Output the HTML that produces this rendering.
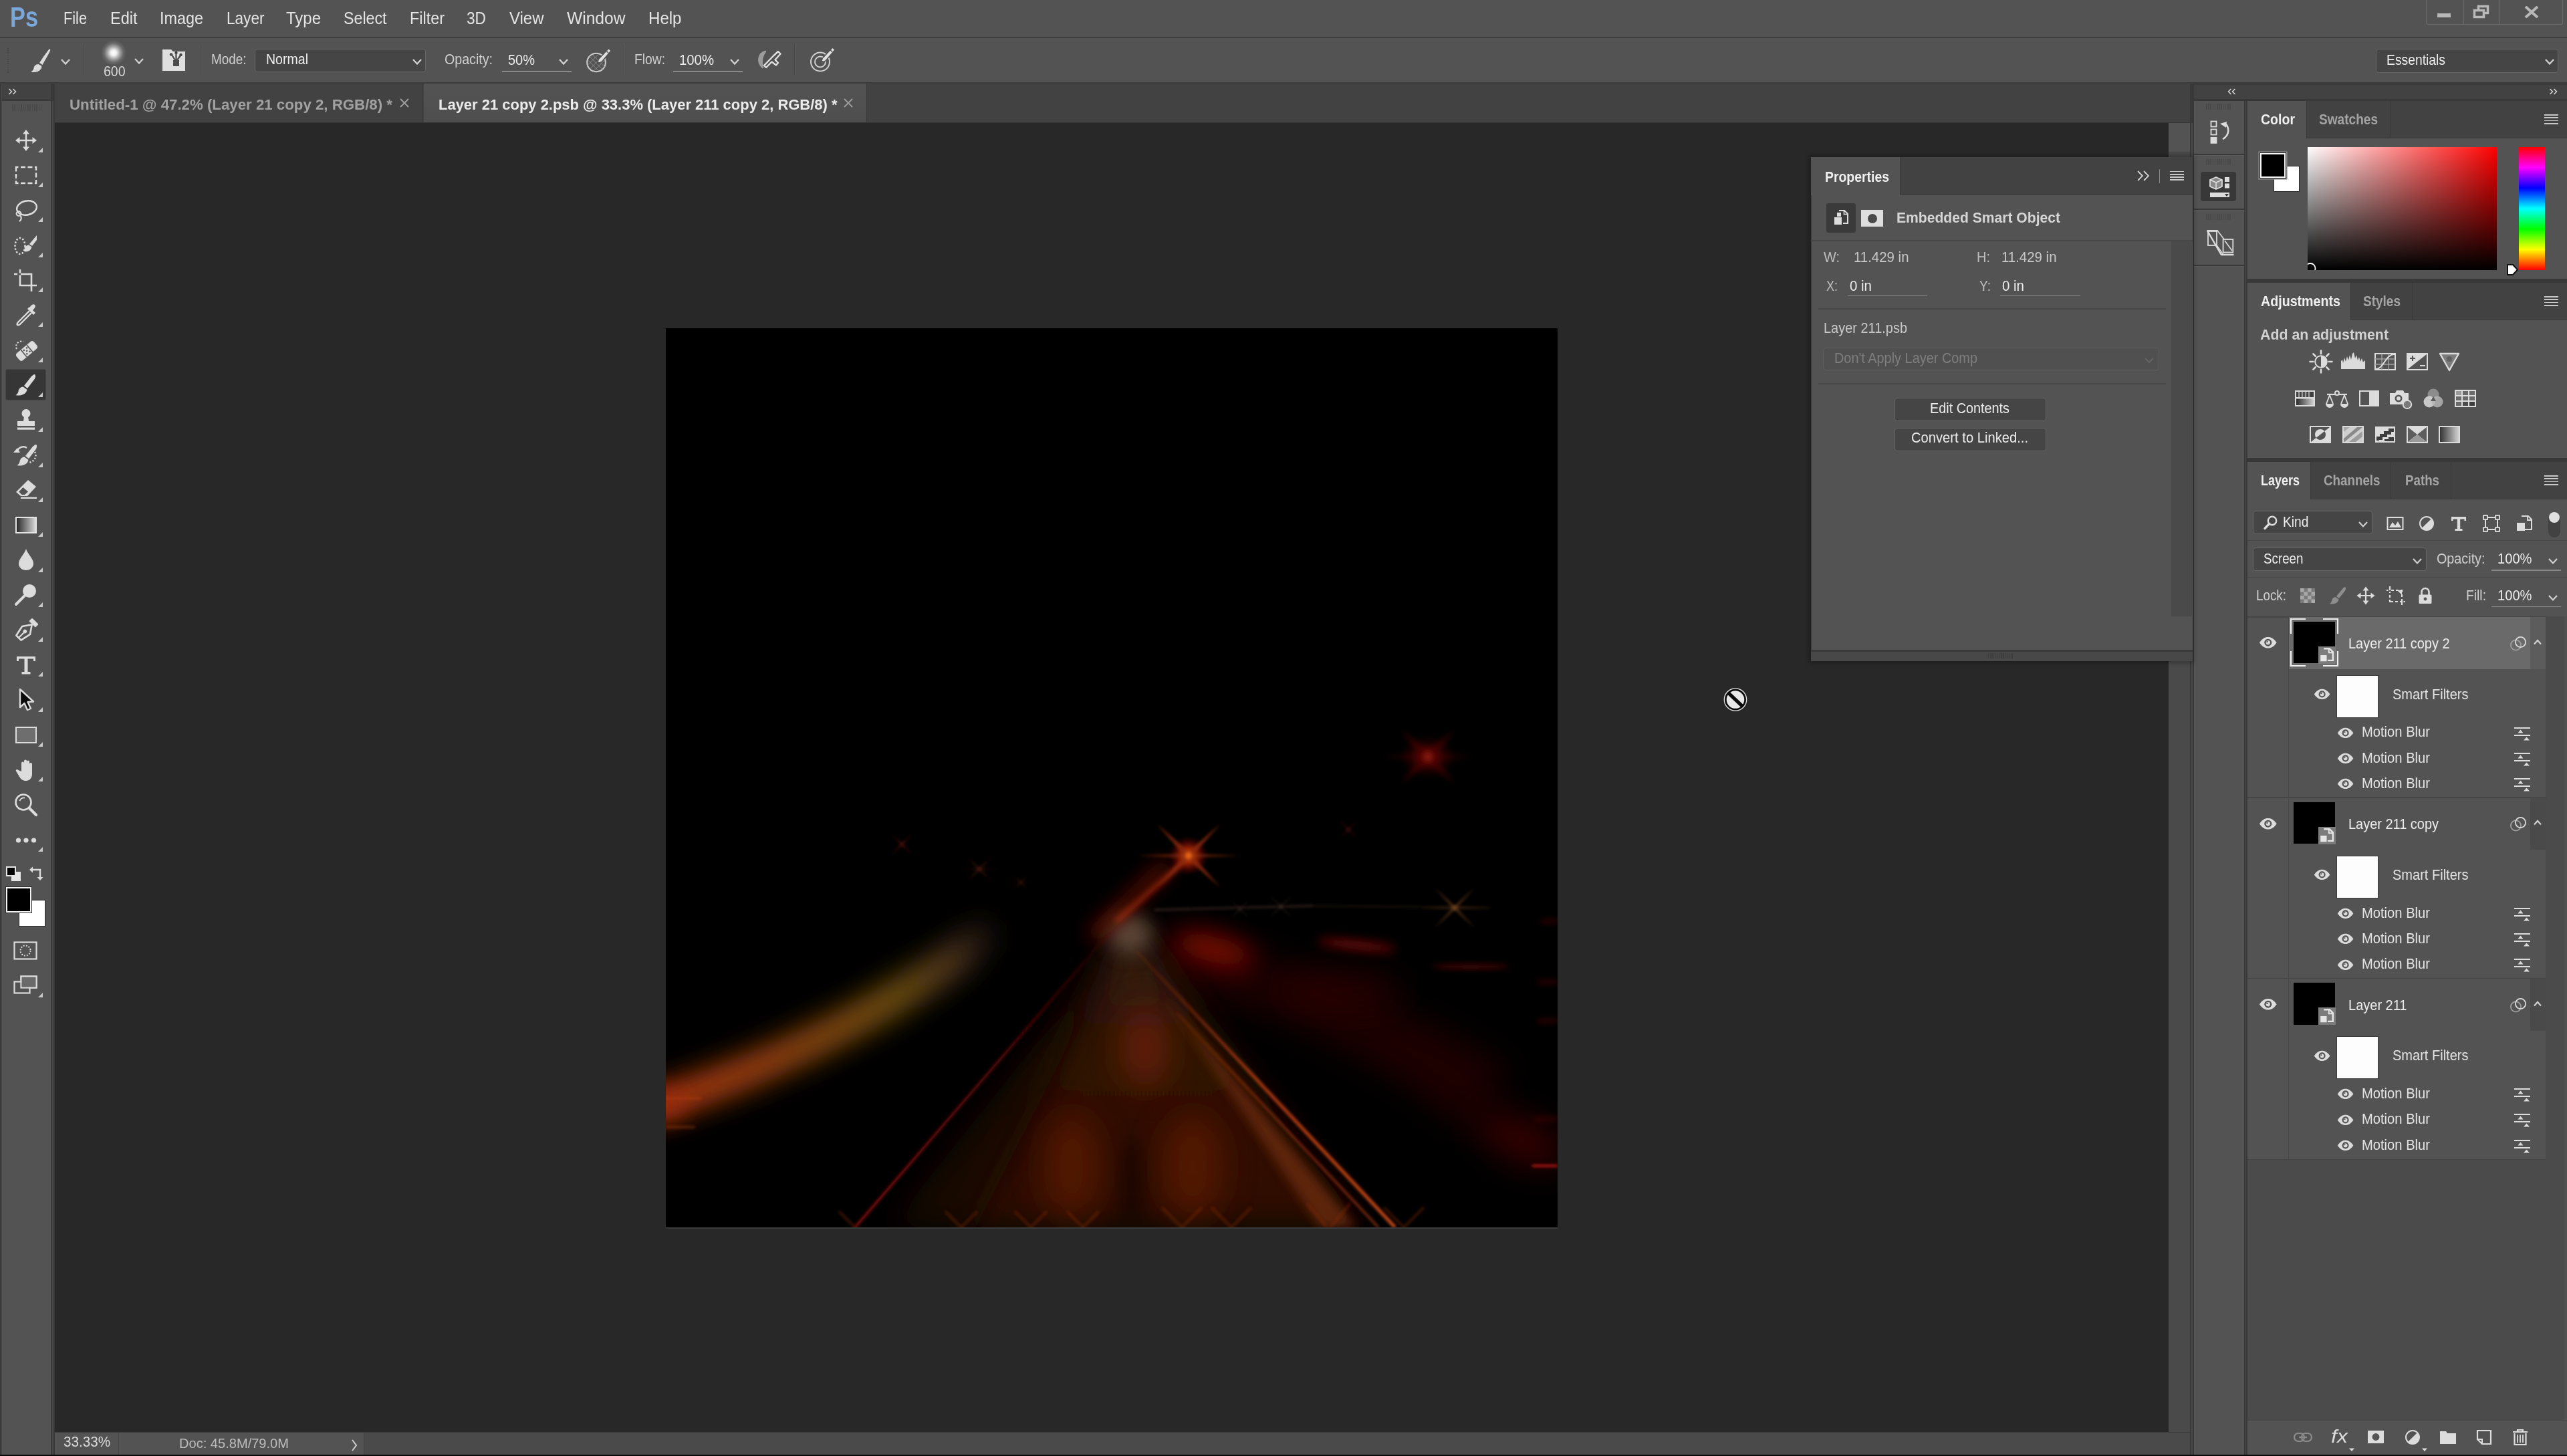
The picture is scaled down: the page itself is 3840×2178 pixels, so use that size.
<!DOCTYPE html>
<html><head><meta charset="utf-8"><title>Ps</title>
<style>
html,body{margin:0;padding:0;background:#535353;}
body{width:3840px;height:2178px;position:relative;overflow:hidden;font-family:"Liberation Sans",sans-serif;}
body>div,body>span,body>svg{position:absolute;display:block;}
body>span{white-space:pre;transform-origin:0 0;}
</style></head><body>
<div style="left:0px;top:0px;width:3840px;height:55px;background:#535353;"></div>
<div style="left:0px;top:55px;width:3840px;height:2px;background:#3e3e3e;"></div>
<div style="left:0px;top:57px;width:3840px;height:66px;background:#535353;"></div>
<div style="left:0px;top:123px;width:3840px;height:2px;background:#3c3c3c;"></div>
<div style="left:82px;top:125px;width:3194px;height:59px;background:#424242;"></div>
<div style="left:82px;top:184px;width:3162px;height:1959px;background:#282828;"></div>
<div style="left:3244px;top:184px;width:32px;height:1959px;background:#4a4a4a;"></div>
<div style="left:3244px;top:184px;width:32px;height:43px;background:#535353;"></div>
<div style="left:82px;top:2143px;width:3194px;height:33px;background:#4a4a4a;"></div>
<div style="left:82px;top:2143px;width:463px;height:33px;background:#535353;"></div>
<div style="left:82px;top:2142px;width:3194px;height:1px;background:#3a3a3a;"></div>
<div style="left:0px;top:125px;width:82px;height:2051px;background:#383838;"></div>
<div style="left:3px;top:125px;width:73px;height:23px;background:#424242;"></div>
<div style="left:3px;top:151px;width:73px;height:2025px;background:#535353;"></div>
<div style="left:3276px;top:125px;width:564px;height:2051px;background:#383838;"></div>
<div style="left:3282px;top:127px;width:558px;height:21px;background:#424242;"></div>
<div style="left:3282px;top:151px;width:75px;height:2025px;background:#535353;"></div>
<div style="left:3362px;top:151px;width:478px;height:2025px;background:#535353;"></div>
<div style="left:3278px;top:184px;width:2px;height:1992px;background:#4a4a4a;"></div>
<div style="left:3358.5px;top:151px;width:2px;height:2025px;background:#4a4a4a;"></div>
<div style="left:78px;top:151px;width:2px;height:2025px;background:#484848;"></div>
<div style="left:0px;top:2176px;width:3840px;height:2px;background:#0a0a0a;"></div>
<div style="left:996px;top:1836px;width:1334px;height:1.5px;background:#3a3a3a;"></div>
<svg style="left:996px;top:491px;" width="1334" height="1345" viewBox="996 491 1334 1345">
<defs>
<filter id="b2" filterUnits="userSpaceOnUse" x="900" y="400" width="1530" height="1540"><feGaussianBlur stdDeviation="2"/></filter>
<filter id="b4" filterUnits="userSpaceOnUse" x="900" y="400" width="1530" height="1540"><feGaussianBlur stdDeviation="4"/></filter>
<filter id="b8" filterUnits="userSpaceOnUse" x="900" y="400" width="1530" height="1540"><feGaussianBlur stdDeviation="8"/></filter>
<filter id="b14" filterUnits="userSpaceOnUse" x="900" y="400" width="1530" height="1540"><feGaussianBlur stdDeviation="14"/></filter>
<filter id="b20" filterUnits="userSpaceOnUse" x="900" y="400" width="1530" height="1540"><feGaussianBlur stdDeviation="20"/></filter>
<filter id="b25" filterUnits="userSpaceOnUse" x="900" y="400" width="1530" height="1540"><feGaussianBlur stdDeviation="25"/></filter>
<filter id="b40" filterUnits="userSpaceOnUse" x="900" y="400" width="1530" height="1540"><feGaussianBlur stdDeviation="40"/></filter>
<linearGradient id="sweep" gradientUnits="userSpaceOnUse" x1="996" y1="0" x2="1500" y2="0">
 <stop offset="0" stop-color="#b0380a"/><stop offset="0.3" stop-color="#96400a"/><stop offset="0.68" stop-color="#70500c"/><stop offset="0.86" stop-color="#5a3c22" stop-opacity="0.85"/><stop offset="1" stop-color="#4a3426" stop-opacity="0"/>
</linearGradient>
<linearGradient id="cone" gradientUnits="userSpaceOnUse" x1="0" y1="1380" x2="0" y2="1836">
 <stop offset="0" stop-color="#44291a" stop-opacity="0.9"/><stop offset="0.35" stop-color="#321606" stop-opacity="0.95"/><stop offset="1" stop-color="#340c04" stop-opacity="0.9"/>
</linearGradient>
<linearGradient id="rline" gradientUnits="userSpaceOnUse" x1="1700" y1="1423" x2="2087" y2="1836">
 <stop offset="0" stop-color="#7a2a08" stop-opacity="0.2"/><stop offset="0.45" stop-color="#b03a10"/><stop offset="1" stop-color="#e0521c"/>
</linearGradient>
<linearGradient id="lline" gradientUnits="userSpaceOnUse" x1="1279" y1="1836" x2="1660" y2="1395">
 <stop offset="0" stop-color="#a81010"/><stop offset="0.6" stop-color="#7a0c0c" stop-opacity="0.9"/><stop offset="1" stop-color="#5a0808" stop-opacity="0.2"/>
</linearGradient>
<radialGradient id="ostar"><stop offset="0" stop-color="#ee6a14"/><stop offset="0.3" stop-color="#d03808"/><stop offset="0.65" stop-color="#7a0c04" stop-opacity="0.7"/><stop offset="1" stop-color="#400000" stop-opacity="0"/></radialGradient>
<radialGradient id="rstar"><stop offset="0" stop-color="#8a160a"/><stop offset="0.3" stop-color="#640806" stop-opacity="0.9"/><stop offset="0.65" stop-color="#300202" stop-opacity="0.6"/><stop offset="1" stop-color="#200000" stop-opacity="0"/></radialGradient>
</defs>
<rect x="996" y="491" width="1334" height="1345" fill="#000"/>
<!-- red haze right -->
<path d="M1720 1400 C1850 1400 2050 1470 2260 1600 L2200 1700 C2050 1560 1850 1500 1740 1470 Z" fill="#3a0404" opacity="0.5" filter="url(#b25)"/>
<ellipse cx="1815" cy="1420" rx="62" ry="20" fill="#960c06" opacity="0.9" filter="url(#b20)" transform="rotate(14 1815 1420)"/>
<ellipse cx="2030" cy="1414" rx="60" ry="7" fill="#8a0c0c" opacity="0.8" filter="url(#b8)" transform="rotate(6 2030 1414)"/>
<ellipse cx="2200" cy="1446" rx="58" ry="3.5" fill="#6a0e0e" opacity="0.7" filter="url(#b4)"/>
<ellipse cx="2010" cy="1480" rx="90" ry="26" fill="#300404" opacity="0.7" filter="url(#b25)"/>
<ellipse cx="2275" cy="1705" rx="70" ry="34" fill="#4a0606" opacity="0.7" filter="url(#b25)" transform="rotate(25 2275 1705)"/>
<path d="M2292 1744 H2330" stroke="#a81212" stroke-width="4" filter="url(#b2)"/>
<path d="M2305 1378 H2330 M2300 1469 H2330 M2300 1527 H2330 M2295 1674 H2330" stroke="#4a0808" stroke-width="4" filter="url(#b4)"/>
<!-- left sweep -->
<path d="M960 1660 Q1262 1566 1492 1388" fill="none" stroke="url(#sweep)" stroke-width="50" filter="url(#b20)" opacity="1"/>
<path d="M996 1643 H1050 M996 1686 H1040" stroke="#c04a14" stroke-width="2" filter="url(#b2)" opacity="0.7"/>
<ellipse cx="1000" cy="1652" rx="30" ry="26" fill="#a02c08" filter="url(#b14)" opacity="0.45"/>
<!-- cone -->
<path d="M1686 1378 L1440 1836 L2040 1836 Z" fill="url(#cone)" filter="url(#b25)"/>
<path d="M1686 1390 L1330 1836 L1460 1836 Z" fill="#200803" opacity="0.7" filter="url(#b25)"/>
<ellipse cx="1713" cy="1568" rx="34" ry="60" fill="#7a2208" opacity="0.7" filter="url(#b25)"/>
<ellipse cx="1603" cy="1745" rx="42" ry="80" fill="#621a06" opacity="0.7" filter="url(#b25)"/>
<ellipse cx="1784" cy="1745" rx="46" ry="80" fill="#621c06" opacity="0.7" filter="url(#b25)"/>
<ellipse cx="1693" cy="1770" rx="14" ry="70" fill="#000" opacity="0.5" filter="url(#b14)"/>
<!-- inner right beam -->
<path d="M1735 1480 L1975 1836 L2030 1836 Z" fill="#6a2c0a" opacity="0.8" filter="url(#b8)"/>
<!-- gray glow -->
<ellipse cx="1690" cy="1396" rx="34" ry="30" fill="#66503e" opacity="0.85" filter="url(#b14)"/>
<!-- star beam -->
<path d="M1770 1290 L1672 1376" stroke="#b83010" stroke-width="8" stroke-linecap="round" filter="url(#b4)" opacity="0.75"/>
<path d="M1740 1300 L1640 1395" stroke="#7a0c04" stroke-width="26" stroke-linecap="round" filter="url(#b14)" opacity="0.6"/>
<!-- lines -->
<path d="M1279 1836 L1660 1395" stroke="url(#lline)" stroke-width="3.2" filter="url(#b2)"/>
<path d="M1700 1423 L2087 1836" stroke="url(#rline)" stroke-width="4.5" filter="url(#b2)"/>
<path d="M1760 1515 L2062 1836" stroke="url(#rline)" stroke-width="2.4" filter="url(#b2)" opacity="0.8"/>
<path d="M1727 1361 L1965 1355" stroke="#6a4a3e" stroke-width="1.8" filter="url(#b2)" opacity="0.7"/>
<path d="M1965 1355 L2230 1358" stroke="#4a3028" stroke-width="1.5" filter="url(#b2)" opacity="0.6"/>
<!-- bottom diamonds -->
<g stroke="#8a2c0c" stroke-width="2.2" fill="none" filter="url(#b2)" opacity="0.75">
<path d="M1255 1812 L1279 1836 M1414 1812 L1438 1836 L1462 1812 M1518 1812 L1542 1836 L1566 1812 M1596 1812 L1620 1836 L1644 1812"/>
<path d="M1738 1806 L1768 1836 L1798 1806 M1812 1806 L1842 1836 L1872 1806 M1955 1800 L1985 1836 M2020 1800 L1990 1836 M2070 1806 L2100 1836 L2130 1806"/>
</g>
<circle cx="1778" cy="1280" r="30" fill="url(#ostar)" opacity="0.8"/><g opacity="0.85"><g filter="url(#b2)" fill="#8a2c0a"><path d="M1774.8 1283.2 L1825.9 1327.9 L1781.2 1276.8 Z"/><path d="M1774.8 1276.8 L1730.1 1327.9 L1781.2 1283.2 Z"/><path d="M1781.2 1276.8 L1730.1 1232.1 L1774.8 1283.2 Z"/><path d="M1781.2 1283.2 L1825.9 1232.1 L1774.8 1276.8 Z"/><path d="M1778 1276.8 L1856 1280 L1778 1283.2 L1700 1280 Z" opacity="0.7"/></g><circle cx="1778" cy="1280" r="5.8" fill="#e86418" filter="url(#b2)"/></g><ellipse cx="2136" cy="1132" rx="44" ry="34" fill="url(#rstar)" opacity="0.8"/><g opacity="0.8"><g filter="url(#b4)" fill="#4a0606"><path d="M2131.1 1136.9 L2175.9 1171.9 L2140.9 1127.1 Z"/><path d="M2131.1 1127.1 L2096.1 1171.9 L2140.9 1136.9 Z"/><path d="M2140.9 1127.1 L2096.1 1092.1 L2131.1 1136.9 Z"/><path d="M2140.9 1136.9 L2175.9 1092.1 L2131.1 1127.1 Z"/><path d="M2136 1127.1 L2206 1132 L2136 1136.9 L2066 1132 Z" opacity="0.7"/></g><circle cx="2136" cy="1132" r="8.0" fill="#8c1a0c" filter="url(#b4)"/></g><g opacity="0.75"><g filter="url(#b2)" fill="#70401e"><path d="M2174.6 1359.4 L2205.9 1387.9 L2177.4 1356.6 Z"/><path d="M2174.6 1356.6 L2146.1 1387.9 L2177.4 1359.4 Z"/><path d="M2177.4 1356.6 L2146.1 1328.1 L2174.6 1359.4 Z"/><path d="M2177.4 1359.4 L2205.9 1328.1 L2174.6 1356.6 Z"/><path d="M2176 1356.6 L2231 1358 L2176 1359.4 L2121 1358 Z" opacity="0.7"/></g><circle cx="2176" cy="1358" r="3.0" fill="#9a5a2c" filter="url(#b2)"/></g><g opacity="0.7"><g filter="url(#b2)" fill="#4a0c0c"><path d="M1347.6 1264.4 L1365.0 1279.0 L1350.4 1261.6 Z"/><path d="M1347.6 1261.6 L1333.0 1279.0 L1350.4 1264.4 Z"/><path d="M1350.4 1261.6 L1333.0 1247.0 L1347.6 1264.4 Z"/><path d="M1350.4 1264.4 L1365.0 1247.0 L1347.6 1261.6 Z"/></g><circle cx="1349" cy="1263" r="2.1" fill="#6a1410" filter="url(#b2)"/></g><g opacity="0.7"><g filter="url(#b2)" fill="#4a1a10"><path d="M1463.8 1301.2 L1482.9 1317.9 L1466.2 1298.8 Z"/><path d="M1463.8 1298.8 L1447.1 1317.9 L1466.2 1301.2 Z"/><path d="M1466.2 1298.8 L1447.1 1282.1 L1463.8 1301.2 Z"/><path d="M1466.2 1301.2 L1482.9 1282.1 L1463.8 1298.8 Z"/><path d="M1465 1298.8 L1497 1300 L1465 1301.2 L1433 1300 Z" opacity="0.7"/></g><circle cx="1465" cy="1300" r="2.3" fill="#7a2c14" filter="url(#b2)"/></g><g opacity="0.6"><g filter="url(#b2)" fill="#3a140c"><path d="M1525.9 1321.1 L1539.0 1332.0 L1528.1 1318.9 Z"/><path d="M1525.9 1318.9 L1515.0 1332.0 L1528.1 1321.1 Z"/><path d="M1528.1 1318.9 L1515.0 1308.0 L1525.9 1321.1 Z"/><path d="M1528.1 1321.1 L1539.0 1308.0 L1525.9 1318.9 Z"/><path d="M1527 1319.0 L1552 1320 L1527 1321.0 L1502 1320 Z" opacity="0.7"/></g><circle cx="1527" cy="1320" r="1.6" fill="#6a2814" filter="url(#b2)"/></g><g opacity="0.6"><g filter="url(#b2)" fill="#2a1e1a"><path d="M1853.9 1361.1 L1869.0 1374.0 L1856.1 1358.9 Z"/><path d="M1853.9 1358.9 L1841.0 1374.0 L1856.1 1361.1 Z"/><path d="M1856.1 1358.9 L1841.0 1346.0 L1853.9 1361.1 Z"/><path d="M1856.1 1361.1 L1869.0 1346.0 L1853.9 1358.9 Z"/></g><circle cx="1855" cy="1360" r="1.8" fill="#4a3a34" filter="url(#b2)"/></g><g opacity="0.6"><g filter="url(#b2)" fill="#2a1e1a"><path d="M1914.9 1357.1 L1935.9 1375.9 L1917.1 1354.9 Z"/><path d="M1914.9 1354.9 L1896.1 1375.9 L1917.1 1357.1 Z"/><path d="M1917.1 1354.9 L1896.1 1336.1 L1914.9 1357.1 Z"/><path d="M1917.1 1357.1 L1935.9 1336.1 L1914.9 1354.9 Z"/></g><circle cx="1916" cy="1356" r="2.6" fill="#4a3a34" filter="url(#b2)"/></g><g opacity="0.7"><g filter="url(#b2)" fill="#3a0a0a"><path d="M2015.6 1242.4 L2031.0 1255.0 L2018.4 1239.6 Z"/><path d="M2015.6 1239.6 L2003.0 1255.0 L2018.4 1242.4 Z"/><path d="M2018.4 1239.6 L2003.0 1227.0 L2015.6 1242.4 Z"/><path d="M2018.4 1242.4 L2031.0 1227.0 L2015.6 1239.6 Z"/></g><circle cx="2017" cy="1241" r="1.8" fill="#5a100c" filter="url(#b2)"/></g></svg>
<span style="left:15px;top:5.45px;font-size:42px;line-height:42px;color:#7aa7d9;font-weight:bold;transform:scaleX(0.8175);">Ps</span>
<span style="left:95px;top:13.57px;font-size:26.5px;line-height:26.5px;color:#e4e4e4;transform:scaleX(0.8196);">File</span>
<span style="left:164.5px;top:13.57px;font-size:26.5px;line-height:26.5px;color:#e4e4e4;transform:scaleX(0.8869);">Edit</span>
<span style="left:239px;top:13.57px;font-size:26.5px;line-height:26.5px;color:#e4e4e4;transform:scaleX(0.8825);">Image</span>
<span style="left:338.5px;top:13.57px;font-size:26.5px;line-height:26.5px;color:#e4e4e4;transform:scaleX(0.8523);">Layer</span>
<span style="left:427.5px;top:13.57px;font-size:26.5px;line-height:26.5px;color:#e4e4e4;transform:scaleX(0.9051);">Type</span>
<span style="left:514px;top:13.57px;font-size:26.5px;line-height:26.5px;color:#e4e4e4;transform:scaleX(0.8757);">Select</span>
<span style="left:613px;top:13.57px;font-size:26.5px;line-height:26.5px;color:#e4e4e4;transform:scaleX(0.8830);">Filter</span>
<span style="left:698px;top:13.57px;font-size:26.5px;line-height:26.5px;color:#e4e4e4;transform:scaleX(0.8561);">3D</span>
<span style="left:762px;top:13.57px;font-size:26.5px;line-height:26.5px;color:#e4e4e4;transform:scaleX(0.9041);">View</span>
<span style="left:848px;top:13.57px;font-size:26.5px;line-height:26.5px;color:#e4e4e4;transform:scaleX(0.9284);">Window</span>
<span style="left:970px;top:13.57px;font-size:26.5px;line-height:26.5px;color:#e4e4e4;transform:scaleX(0.9082);">Help</span>
<div style="left:3629px;top:0px;width:205px;height:37px;background:transparent;border:1px solid #6a6a6a;border-top:none;box-sizing:border-box;border-radius:0 0 3px 3px;"></div>
<div style="left:3685px;top:0px;width:1px;height:36px;background:#6a6a6a;"></div>
<div style="left:3739px;top:0px;width:1px;height:36px;background:#6a6a6a;"></div>
<div style="left:3646px;top:20px;width:20px;height:6px;background:#b8b8b8;"></div>
<svg style="left:3699px;top:7px;" width="26" height="22" viewBox="0 0 26 22"><rect x="8.5" y="2.5" width="14" height="10" fill="none" stroke="#b8b8b8" stroke-width="3.5"/><rect x="2.5" y="8.5" width="14" height="10" fill="#535353" stroke="#b8b8b8" stroke-width="3.5"/></svg>
<svg style="left:3776px;top:9px;" width="22" height="18" viewBox="0 0 22 18"><path d="M2 1 L20 17 M20 1 L2 17" stroke="#b8b8b8" stroke-width="4" fill="none"/></svg>
<div style="left:11px;top:72.0px;width:2px;height:1.6px;background:#454545;"></div>
<div style="left:11px;top:75.2px;width:2px;height:1.6px;background:#454545;"></div>
<div style="left:11px;top:78.4px;width:2px;height:1.6px;background:#454545;"></div>
<div style="left:11px;top:81.6px;width:2px;height:1.6px;background:#454545;"></div>
<div style="left:11px;top:84.8px;width:2px;height:1.6px;background:#454545;"></div>
<div style="left:11px;top:88.0px;width:2px;height:1.6px;background:#454545;"></div>
<div style="left:11px;top:91.2px;width:2px;height:1.6px;background:#454545;"></div>
<div style="left:11px;top:94.4px;width:2px;height:1.6px;background:#454545;"></div>
<div style="left:11px;top:97.6px;width:2px;height:1.6px;background:#454545;"></div>
<div style="left:11px;top:100.8px;width:2px;height:1.6px;background:#454545;"></div>
<div style="left:11px;top:104.0px;width:2px;height:1.6px;background:#454545;"></div>
<div style="left:11px;top:107.2px;width:2px;height:1.6px;background:#454545;"></div>
<svg style="left:44px;top:72px;" width="36" height="38" viewBox="0 0 36 38"><path d="M30 1 C28 3 20 14 15 22 L19.5 25 C24 17 30 7 31.5 2.5 Z" fill="#dadada"/><path d="M13.5 24 C9 24 7 27 6.5 30 C6 33 4 34.5 2 35.5 C8 37 14 35.5 17 31.5 C18.5 29.5 18.5 27.5 18 26.5 Z" fill="#dadada"/></svg>
<svg style="left:90px;top:87px;" width="16" height="10.5" viewBox="0 0 16 10.5"><path d="M2 2 L8.0 8.5 L14 2" fill="none" stroke="#d0d0d0" stroke-width="2.3"/></svg>
<div style="left:124px;top:66px;width:1px;height:46px;background:#474747;"></div>
<div style="left:125px;top:66px;width:1px;height:46px;background:#5c5c5c;"></div>
<div style="left:151px;top:60px;width:38px;height:38px;background:radial-gradient(circle closest-side,#ffffff 0%,#f0f0f0 22%,#a8a8a8 48%,#6a6a6a 75%,rgba(83,83,83,0) 100%);"></div>
<span style="left:155px;top:96.80px;font-size:21.5px;line-height:21.5px;color:#d8d8d8;transform:scaleX(0.9060);">600</span>
<svg style="left:200px;top:86px;" width="16" height="10.5" viewBox="0 0 16 10.5"><path d="M2 2 L8.0 8.5 L14 2" fill="none" stroke="#d0d0d0" stroke-width="2.3"/></svg>
<svg style="left:243px;top:72px;" width="35" height="35" viewBox="0 0 35 35"><path d="M0 2 H13 L16 5 H34 V34 H0 Z" fill="#dedede"/><path d="M16 27 h9 v-9 h-9z" fill="#4a4a4a"/><path d="M19 18 L14 10 M20.5 18 L20.5 8 M22 18 L27 11" stroke="#4a4a4a" stroke-width="2.2" fill="none"/><circle cx="13" cy="9.5" r="2.2" fill="#4a4a4a"/><circle cx="20.5" cy="7" r="2.2" fill="#4a4a4a"/><circle cx="27.5" cy="10" r="2.2" fill="#4a4a4a"/></svg>
<div style="left:299px;top:66px;width:1px;height:46px;background:#474747;"></div>
<div style="left:300px;top:66px;width:1px;height:46px;background:#5c5c5c;"></div>
<span style="left:315.5px;top:79.30px;font-size:21.5px;line-height:21.5px;color:#cfcfcf;transform:scaleX(0.8786);">Mode:</span>
<div style="left:381px;top:73px;width:256px;height:35px;background:#454545;border:1px solid #666;box-sizing:border-box;border-radius:4px;"></div>
<span style="left:398px;top:79.30px;font-size:21.5px;line-height:21.5px;color:#ececec;transform:scaleX(0.9092);">Normal</span>
<svg style="left:616px;top:86.5px;" width="16" height="10.5" viewBox="0 0 16 10.5"><path d="M2 2 L8.0 8.5 L14 2" fill="none" stroke="#d0d0d0" stroke-width="2.3"/></svg>
<span style="left:665px;top:79.30px;font-size:21.5px;line-height:21.5px;color:#cfcfcf;transform:scaleX(0.9130);">Opacity:</span>
<span style="left:760px;top:79.80px;font-size:21.5px;line-height:21.5px;color:#ececec;transform:scaleX(0.9295);">50%</span>
<div style="left:751px;top:106px;width:104px;height:1.5px;background:#8a8a8a;"></div>
<svg style="left:835px;top:86.5px;" width="16" height="10.5" viewBox="0 0 16 10.5"><path d="M2 2 L8.0 8.5 L14 2" fill="none" stroke="#d0d0d0" stroke-width="2.3"/></svg>
<svg style="left:876px;top:71px;" width="40" height="40" viewBox="0 0 40 40"><circle cx="16" cy="22.5" r="13.8" fill="none" stroke="#cfcfcf" stroke-width="2"/><g stroke="#8c8c8c" stroke-width="1"><path d="M6 13.5 L26 33.5 M10 10.5 L29 29.5 M4 19.5 L20 35.5 M26 12.5 L5 33.5 M29 18.5 L11 36.5 M20 9.5 L3 26.5"/></g><path d="M34.5 1.5 L38 5 L24 21.5 L17 24.5 L19.5 17.5 Z" fill="#e0e0e0" stroke="#535353" stroke-width="1.4" stroke-linejoin="round"/><path d="M31.2 5.3 L34.3 8.5" stroke="#535353" stroke-width="1.4"/><path d="M17 24.5 L18.4 20.6 L20.8 22.9 Z" fill="#535353"/></svg>
<div style="left:933px;top:66px;width:1px;height:46px;background:#474747;"></div>
<div style="left:934px;top:66px;width:1px;height:46px;background:#5c5c5c;"></div>
<span style="left:949px;top:79.30px;font-size:21.5px;line-height:21.5px;color:#cfcfcf;transform:scaleX(0.8955);">Flow:</span>
<span style="left:1016px;top:79.80px;font-size:21.5px;line-height:21.5px;color:#ececec;transform:scaleX(0.9456);">100%</span>
<div style="left:1007px;top:106px;width:104px;height:1.5px;background:#8a8a8a;"></div>
<svg style="left:1091px;top:86.5px;" width="16" height="10.5" viewBox="0 0 16 10.5"><path d="M2 2 L8.0 8.5 L14 2" fill="none" stroke="#d0d0d0" stroke-width="2.3"/></svg>
<svg style="left:1131px;top:74px;" width="40" height="32" viewBox="0 0 40 32"><path d="M14 3 C3 6 1 19 10 27 C7.5 19 8.5 10 14 3Z" fill="#9c9c9c" stroke="#9c9c9c" stroke-width="2.5" stroke-linejoin="round"/><path d="M33 3 L36.5 6.5 L28.5 15.5 L33 20 L30 23.5 L23.5 18.5 L15 27 L12 24 L26.5 9 Z" fill="none" stroke="#dedede" stroke-width="2.4" stroke-linejoin="round"/></svg>
<div style="left:1188px;top:66px;width:1px;height:46px;background:#474747;"></div>
<div style="left:1189px;top:66px;width:1px;height:46px;background:#5c5c5c;"></div>
<svg style="left:1211px;top:69px;" width="40" height="40" viewBox="0 0 40 40"><circle cx="16" cy="23.5" r="14" fill="none" stroke="#cfcfcf" stroke-width="2"/><circle cx="16" cy="23.5" r="8" fill="none" stroke="#cfcfcf" stroke-width="2"/><g transform="translate(0,0.5)"><path d="M34.5 1.5 L38 5 L24 21.5 L17 24.5 L19.5 17.5 Z" fill="#e0e0e0" stroke="#535353" stroke-width="1.4" stroke-linejoin="round"/><path d="M31.2 5.3 L34.3 8.5" stroke="#535353" stroke-width="1.4"/><path d="M17 24.5 L18.4 20.6 L20.8 22.9 Z" fill="#535353"/></g></svg>
<div style="left:3554px;top:73px;width:273px;height:36px;background:#454545;border:1px solid #666;box-sizing:border-box;border-radius:4px;"></div>
<span style="left:3570px;top:79.45px;font-size:22.5px;line-height:22.5px;color:#ececec;transform:scaleX(0.8581);">Essentials</span>
<svg style="left:3806px;top:86.5px;" width="16" height="10.5" viewBox="0 0 16 10.5"><path d="M2 2 L8.0 8.5 L14 2" fill="none" stroke="#d0d0d0" stroke-width="2.3"/></svg>
<div style="left:82px;top:125px;width:551px;height:59px;background:#424242;border-right:1px solid #383838;box-sizing:border-box;"></div>
<div style="left:634px;top:125px;width:663px;height:59px;background:linear-gradient(#535353,#4e4e4e);border-right:1px solid #383838;box-sizing:border-box;"></div>
<div style="left:82px;top:183px;width:3194px;height:1px;background:#333;"></div>
<span style="left:103.5px;top:146.45px;font-size:22.5px;line-height:22.5px;color:#a2a2a2;font-weight:bold;transform:scaleX(0.9890);">Untitled-1 @ 47.2% (Layer 21 copy 2, RGB/8) *</span>
<span style="left:655.5px;top:146.45px;font-size:22.5px;line-height:22.5px;color:#ececec;font-weight:bold;transform:scaleX(0.9763);">Layer 21 copy 2.psb @ 33.3% (Layer 211 copy 2, RGB/8) *</span>
<svg style="left:597px;top:146px;" width="16" height="16" viewBox="0 0 16 16"><path d="M2 2 L14 14 M14 2 L2 14" stroke="#a0a0a0" stroke-width="1.8"/></svg>
<svg style="left:1261px;top:146px;" width="16" height="16" viewBox="0 0 16 16"><path d="M2 2 L14 14 M14 2 L2 14" stroke="#a0a0a0" stroke-width="1.8"/></svg>
<span style="left:94.5px;top:2147.30px;font-size:21.5px;line-height:21.5px;color:#dcdcdc;transform:scaleX(0.9600);">33.33%</span>
<div style="left:177px;top:2143px;width:1px;height:33px;background:#444;"></div>
<span style="left:267.5px;top:2147.72px;font-size:21px;line-height:21px;color:#bdbdbd;transform:scaleX(0.9558);">Doc: 45.8M/79.0M</span>
<svg style="left:524px;top:2152px;" width="12" height="20" viewBox="0 0 12 20"><path d="M3 2 L9 10 L3 18" fill="none" stroke="#cfcfcf" stroke-width="2"/></svg>
<div style="left:544px;top:2143px;width:1px;height:33px;background:#444;"></div>
<svg style="left:12px;top:132px;" width="15" height="10" viewBox="0 0 15 10"><path d="M1.5 1 L5.5 5 L1.5 9 M7.5 1 L11.5 5 L7.5 9" fill="none" stroke="#d8d8d8" stroke-width="1.5"/></svg>
<div style="left:3px;top:148px;width:73px;height:3px;background:#3a3a3a;"></div>
<div style="left:18.0px;top:155.5px;width:1.6px;height:10px;background:#494949;"></div>
<div style="left:21.3px;top:155.5px;width:1.6px;height:10px;background:#494949;"></div>
<div style="left:24.6px;top:155.5px;width:1.6px;height:10px;background:#494949;"></div>
<div style="left:27.9px;top:155.5px;width:1.6px;height:10px;background:#494949;"></div>
<div style="left:31.2px;top:155.5px;width:1.6px;height:10px;background:#494949;"></div>
<div style="left:34.5px;top:155.5px;width:1.6px;height:10px;background:#494949;"></div>
<div style="left:37.8px;top:155.5px;width:1.6px;height:10px;background:#494949;"></div>
<div style="left:41.099999999999994px;top:155.5px;width:1.6px;height:10px;background:#494949;"></div>
<div style="left:44.4px;top:155.5px;width:1.6px;height:10px;background:#494949;"></div>
<div style="left:47.7px;top:155.5px;width:1.6px;height:10px;background:#494949;"></div>
<div style="left:51.0px;top:155.5px;width:1.6px;height:10px;background:#494949;"></div>
<div style="left:54.3px;top:155.5px;width:1.6px;height:10px;background:#494949;"></div>
<div style="left:57.599999999999994px;top:155.5px;width:1.6px;height:10px;background:#494949;"></div>
<div style="left:60.9px;top:155.5px;width:1.6px;height:10px;background:#494949;"></div>
<div style="left:0px;top:125px;width:1.5px;height:2051px;background:#3a3a3a;"></div>
<div style="left:1.5px;top:125px;width:1.5px;height:2051px;background:#4a4a4a;"></div>
<svg style="left:18.5px;top:190.0px;" width="40" height="40" viewBox="0 0 40 40"><path d="M20 7 V33 M7 20 H33" fill="none" stroke="#dcdcdc" stroke-width="2.4"/><path d="M20 4 L25 10.5 H15 Z M20 36 L25 29.5 H15 Z M4 20 L10.5 15 V25 Z M36 20 L29.5 15 V25 Z" fill="#dcdcdc"/></svg>
<svg style="left:57px;top:220.5px;" width="8" height="8" viewBox="0 0 8 8"><path d="M7 0 V7 H0 Z" fill="#c8c8c8"/></svg>
<svg style="left:18.5px;top:242.3px;" width="40" height="40" viewBox="0 0 40 40"><rect x="5" y="8" width="30" height="24" fill="none" stroke="#dcdcdc" stroke-width="2.4" stroke-dasharray="7 3.5" stroke-dashoffset="3.5"/></svg>
<svg style="left:57px;top:272.8px;" width="8" height="8" viewBox="0 0 8 8"><path d="M7 0 V7 H0 Z" fill="#c8c8c8"/></svg>
<svg style="left:18.5px;top:294.7px;" width="40" height="40" viewBox="0 0 40 40"><ellipse cx="21" cy="16" rx="15" ry="10.5" transform="rotate(-12 21 16)" fill="none" stroke="#dcdcdc" stroke-width="2.4"/><circle cx="9" cy="24.5" r="3.4" fill="none" stroke="#dcdcdc" stroke-width="2"/><path d="M11 27 C14 30 13 34 10 36" fill="none" stroke="#dcdcdc" stroke-width="2.2"/></svg>
<svg style="left:57px;top:325.2px;" width="8" height="8" viewBox="0 0 8 8"><path d="M7 0 V7 H0 Z" fill="#c8c8c8"/></svg>
<svg style="left:18.5px;top:347.0px;" width="40" height="40" viewBox="0 0 40 40"><ellipse cx="11" cy="21" rx="7.5" ry="12" fill="none" stroke="#dcdcdc" stroke-width="2.6" stroke-dasharray="2.4 2.6"/><path d="M36 5 L36 12 L29 21 L25 18 Z" fill="#dcdcdc"/><path d="M24 19.5 C19 20 17.5 24 17 29 C22 30.5 27 28 28.5 22.5 Z" fill="#dcdcdc"/></svg>
<svg style="left:57px;top:377.5px;" width="8" height="8" viewBox="0 0 8 8"><path d="M7 0 V7 H0 Z" fill="#c8c8c8"/></svg>
<svg style="left:18.5px;top:399.3px;" width="40" height="40" viewBox="0 0 40 40"><path d="M11 4 V28 H36 M2 11 H28 V37" fill="none" stroke="#dcdcdc" stroke-width="2.6"/><rect x="7" y="9.5" width="5" height="3" fill="#535353"/><rect x="26.5" y="26.5" width="3" height="3" fill="#535353" opacity="0"/></svg>
<svg style="left:57px;top:429.8px;" width="8" height="8" viewBox="0 0 8 8"><path d="M7 0 V7 H0 Z" fill="#c8c8c8"/></svg>
<svg style="left:18.5px;top:451.6px;" width="40" height="40" viewBox="0 0 40 40"><path d="M25 13 L9 29 C7 31 6 33 7 34 C8 35 10 34 12 32 L28 16" fill="none" stroke="#dcdcdc" stroke-width="2.4"/><path d="M22 10 L31 19 L34 16 L30 12 C33 9 35 6 33 4 C31 2 28 4 26 7 L24 8 Z" fill="#dcdcdc"/></svg>
<svg style="left:57px;top:482.1px;" width="8" height="8" viewBox="0 0 8 8"><path d="M7 0 V7 H0 Z" fill="#c8c8c8"/></svg>
<svg style="left:18.5px;top:504.0px;" width="40" height="40" viewBox="0 0 40 40"><g transform="rotate(-40 21 21)"><rect x="4" y="14" width="34" height="14" rx="4" fill="#dcdcdc"/><rect x="14.5" y="14" width="1.6" height="14" fill="#535353"/><rect x="26" y="14" width="1.6" height="14" fill="#535353"/><g fill="#535353"><circle cx="18.5" cy="17.5" r="1.3"/><circle cx="21.2" cy="21" r="1.3"/><circle cx="24" cy="17.5" r="1.3"/><circle cx="18.5" cy="24.5" r="1.3"/><circle cx="24" cy="24.5" r="1.3"/><circle cx="21.2" cy="17.5" r="0"/></g></g><path d="M6 18 C3 12 8 5 16 7" fill="none" stroke="#dcdcdc" stroke-width="2.2" stroke-dasharray="2.2 2.4"/></svg>
<svg style="left:57px;top:534.5px;" width="8" height="8" viewBox="0 0 8 8"><path d="M7 0 V7 H0 Z" fill="#c8c8c8"/></svg>
<div style="left:8px;top:552px;width:61px;height:47px;background:#363636;border:1px solid #464646;box-sizing:border-box;border-radius:3px;"></div>
<svg style="left:18.5px;top:556.3px;" width="40" height="40" viewBox="0 0 40 40"><path d="M33 4 C35 6 34 9 32 12 L22 25 L17 21 L28 7 C30 5 32 3.5 33 4 Z" fill="#dcdcdc"/><path d="M15.5 22.5 C11 23 9 26 8.5 29.5 C8 32.5 6 34 4.5 35 C10 36.5 17 35 20 30.5 C21.5 28.5 21.5 27 21 26.5 Z" fill="#dcdcdc"/></svg>
<svg style="left:57px;top:586.8px;" width="8" height="8" viewBox="0 0 8 8"><path d="M7 0 V7 H0 Z" fill="#c8c8c8"/></svg>
<svg style="left:18.5px;top:608.6px;" width="40" height="40" viewBox="0 0 40 40"><circle cx="20" cy="9.5" r="6.5" fill="#dcdcdc"/><path d="M17 14 H23 L24 21 H33 V28 H7 V21 H16 Z" fill="#dcdcdc"/><rect x="7" y="30.5" width="26" height="3.2" fill="#dcdcdc"/></svg>
<svg style="left:57px;top:639.1px;" width="8" height="8" viewBox="0 0 8 8"><path d="M7 0 V7 H0 Z" fill="#c8c8c8"/></svg>
<svg style="left:18.5px;top:661.0px;" width="40" height="40" viewBox="0 0 40 40"><g transform="translate(2,0)"><path d="M33 4 C35 6 34 9 32 12 L22 25 L17 21 L28 7 C30 5 32 3.5 33 4 Z" fill="#dcdcdc"/><path d="M15.5 22.5 C11 23 9 26 8.5 29.5 C8 32.5 6 34 4.5 35 C10 36.5 17 35 20 30.5 C21.5 28.5 21.5 27 21 26.5 Z" fill="#dcdcdc"/></g><path d="M1 16 L11 16 L7 9 Z" fill="#dcdcdc"/><path d="M7 13 C10 7 17 6 21 9" fill="none" stroke="#dcdcdc" stroke-width="2.4"/><path d="M33 15 C37 21 33 29 25 31" fill="none" stroke="#dcdcdc" stroke-width="2.4" stroke-dasharray="2 2.6"/></svg>
<svg style="left:57px;top:691.5px;" width="8" height="8" viewBox="0 0 8 8"><path d="M7 0 V7 H0 Z" fill="#c8c8c8"/></svg>
<svg style="left:18.5px;top:713.3px;" width="40" height="40" viewBox="0 0 40 40"><path d="M23 5 L35 15 L22 29 H12 L5 23 Z" fill="#dcdcdc"/><path d="M9.2 22.6 L15.5 16 L23 22.5 L18 27 H13.5 Z" fill="#535353"/><path d="M12 31.8 H36" stroke="#dcdcdc" stroke-width="2.4"/></svg>
<svg style="left:57px;top:743.8px;" width="8" height="8" viewBox="0 0 8 8"><path d="M7 0 V7 H0 Z" fill="#c8c8c8"/></svg>
<div style="left:22.5px;top:772.6px;width:32px;height:25px;box-sizing:border-box;border:2.5px solid #e4e4e4;background:linear-gradient(90deg,#2a2a2a,#d8d8d8)"></div>
<svg style="left:18.5px;top:765.6px;" width="40" height="40" viewBox="0 0 40 40"></svg>
<svg style="left:57px;top:796.1px;" width="8" height="8" viewBox="0 0 8 8"><path d="M7 0 V7 H0 Z" fill="#c8c8c8"/></svg>
<svg style="left:18.5px;top:818.0px;" width="40" height="40" viewBox="0 0 40 40"><path d="M20 3 C22 10 31 18 31 25 C31 31 26 35 20 35 C14 35 9 31 9 25 C9 18 18 10 20 3 Z" fill="#dcdcdc"/></svg>
<svg style="left:57px;top:848.5px;" width="8" height="8" viewBox="0 0 8 8"><path d="M7 0 V7 H0 Z" fill="#c8c8c8"/></svg>
<svg style="left:18.5px;top:870.3px;" width="40" height="40" viewBox="0 0 40 40"><circle cx="25" cy="14" r="10" fill="#dcdcdc"/><path d="M18 21 L5 34" stroke="#dcdcdc" stroke-width="4" stroke-linecap="round"/></svg>
<svg style="left:57px;top:900.8px;" width="8" height="8" viewBox="0 0 8 8"><path d="M7 0 V7 H0 Z" fill="#c8c8c8"/></svg>
<svg style="left:18.5px;top:922.6px;" width="40" height="40" viewBox="0 0 40 40"><g transform="rotate(45 20 20) translate(20 20) scale(1.12) translate(-20 -20)"><path d="M20 9 L27.5 20 L24.5 34 H15.5 L12.5 20 Z" fill="none" stroke="#dcdcdc" stroke-width="2.3" stroke-linejoin="round"/><path d="M20 34 V24" stroke="#dcdcdc" stroke-width="1.9"/><circle cx="20" cy="22" r="2.5" fill="#dcdcdc"/><rect x="14" y="2.5" width="12" height="6" rx="1" fill="#dcdcdc"/></g></svg>
<svg style="left:57px;top:953.1px;" width="8" height="8" viewBox="0 0 8 8"><path d="M7 0 V7 H0 Z" fill="#c8c8c8"/></svg>
<svg style="left:18.5px;top:974.9px;" width="40" height="40" viewBox="0 0 40 40"><path d="M6 7 H34 V14 H31 V10.5 H22.5 V30 H26.5 V33.5 H13.5 V30 H17.5 V10.5 H9 V14 H6 Z" fill="#dcdcdc"/></svg>
<svg style="left:57px;top:1005.4px;" width="8" height="8" viewBox="0 0 8 8"><path d="M7 0 V7 H0 Z" fill="#c8c8c8"/></svg>
<svg style="left:18.5px;top:1027.3px;" width="40" height="40" viewBox="0 0 40 40"><path d="M11 4 L11 31 L17.5 25 L22 35 L27 33 L22.5 23 L31 22.5 Z" fill="#0a0a0a" stroke="#dcdcdc" stroke-width="2.4" stroke-linejoin="round"/></svg>
<svg style="left:57px;top:1057.8px;" width="8" height="8" viewBox="0 0 8 8"><path d="M7 0 V7 H0 Z" fill="#c8c8c8"/></svg>
<div style="left:22.5px;top:1086.6px;width:32px;height:25px;box-sizing:border-box;border:2.5px solid #dcdcdc;background:#6e6e6e"></div>
<svg style="left:18.5px;top:1079.6px;" width="40" height="40" viewBox="0 0 40 40"></svg>
<svg style="left:57px;top:1110.1px;" width="8" height="8" viewBox="0 0 8 8"><path d="M7 0 V7 H0 Z" fill="#c8c8c8"/></svg>
<svg style="left:18.5px;top:1131.9px;" width="40" height="40" viewBox="0 0 40 40"><path d="M13 22 V9.5 a2 2 0 0 1 4 0 V19 V6.5 a2 2 0 0 1 4 0 V19 V7.5 a2 2 0 0 1 4 0 V20 V11 a2 2 0 0 1 4 0 V26 C29 32 25 36 20 36 C15 36 12 33.5 9.5 29 L5 21.5 C4 19.5 6.5 18 8.5 20 Z" fill="#dcdcdc"/></svg>
<svg style="left:57px;top:1162.4px;" width="8" height="8" viewBox="0 0 8 8"><path d="M7 0 V7 H0 Z" fill="#c8c8c8"/></svg>
<svg style="left:18.5px;top:1184.3px;" width="40" height="40" viewBox="0 0 40 40"><circle cx="16" cy="16" r="11.5" fill="none" stroke="#dcdcdc" stroke-width="2.6"/><path d="M10.5 14 A6.5 6.5 0 0 1 18 9.5" fill="none" stroke="#dcdcdc" stroke-width="1.8"/><path d="M24.5 24.5 L35 35" stroke="#dcdcdc" stroke-width="4.2" stroke-linecap="round"/></svg>
<svg style="left:18.5px;top:1236.6px;" width="40" height="40" viewBox="0 0 40 40"><circle cx="8.5" cy="20" r="3.6" fill="#dcdcdc"/><circle cx="20" cy="20" r="3.6" fill="#dcdcdc"/><circle cx="31.5" cy="20" r="3.6" fill="#dcdcdc"/></svg>
<svg style="left:57px;top:1267.1px;" width="8" height="8" viewBox="0 0 8 8"><path d="M7 0 V7 H0 Z" fill="#c8c8c8"/></svg>
<div style="left:17px;top:1304px;width:14px;height:14px;background:#e6e6e6;"></div>
<div style="left:9px;top:1296px;width:15px;height:15px;background:#000;border:2px solid #e6e6e6;box-sizing:border-box;"></div>
<svg style="left:43px;top:1294px;" width="24" height="24" viewBox="0 0 24 24"><path d="M6 2.5 L1 7 L6 11.5 Z M21.5 18 L17 23 L12.5 18 Z" fill="#dcdcdc"/><path d="M5 7 H17 V19" fill="none" stroke="#dcdcdc" stroke-width="2.4"/></svg>
<div style="left:28px;top:1346px;width:40px;height:40px;background:#fff;border:1.5px solid #2c2c2c;box-sizing:border-box;"></div>
<div style="left:9px;top:1327px;width:38px;height:38px;background:#000;border:2.5px solid #f4f4f4;box-sizing:border-box;outline:1.5px solid #2c2c2c;"></div>
<svg style="left:20px;top:1408px;" width="37" height="29" viewBox="0 0 37 29"><rect x="1.5" y="1.5" width="33" height="25" fill="none" stroke="#dcdcdc" stroke-width="2.2"/><circle cx="18" cy="14" r="7.5" fill="none" stroke="#dcdcdc" stroke-width="2" stroke-dasharray="1.8 2.2"/></svg>
<svg style="left:20px;top:1459px;" width="37" height="31" viewBox="0 0 37 31"><rect x="11.5" y="1.5" width="23" height="17" fill="#535353" stroke="#dcdcdc" stroke-width="2.2"/><rect x="1.5" y="9.5" width="23" height="17" fill="#535353" stroke="#dcdcdc" stroke-width="2.2"/><rect x="11.5" y="1.5" width="23" height="17" fill="none" stroke="#dcdcdc" stroke-width="2.2"/><rect x="12.6" y="2.6" width="20.8" height="14.8" fill="#6a6a6a"/></svg>
<svg style="left:57px;top:1484.5px;" width="8" height="8" viewBox="0 0 8 8"><path d="M7 0 V7 H0 Z" fill="#c8c8c8"/></svg>
<svg style="left:3332px;top:132px;" width="15" height="10" viewBox="0 0 15 10"><path d="M5.5 1 L1.5 5 L5.5 9 M11.5 1 L7.5 5 L11.5 9" fill="none" stroke="#d8d8d8" stroke-width="1.5"/></svg>
<svg style="left:3813px;top:132px;" width="15" height="10" viewBox="0 0 15 10"><path d="M1.5 1 L5.5 5 L1.5 9 M7.5 1 L11.5 5 L7.5 9" fill="none" stroke="#d8d8d8" stroke-width="1.5"/></svg>
<div style="left:3282px;top:148px;width:558px;height:3px;background:#383838;"></div>
<div style="left:3300.0px;top:155px;width:1.6px;height:9px;background:#494949;"></div>
<div style="left:3303.2px;top:155px;width:1.6px;height:9px;background:#494949;"></div>
<div style="left:3306.4px;top:155px;width:1.6px;height:9px;background:#494949;"></div>
<div style="left:3309.6px;top:155px;width:1.6px;height:9px;background:#494949;"></div>
<div style="left:3312.8px;top:155px;width:1.6px;height:9px;background:#494949;"></div>
<div style="left:3316.0px;top:155px;width:1.6px;height:9px;background:#494949;"></div>
<div style="left:3319.2px;top:155px;width:1.6px;height:9px;background:#494949;"></div>
<div style="left:3322.4px;top:155px;width:1.6px;height:9px;background:#494949;"></div>
<div style="left:3325.6px;top:155px;width:1.6px;height:9px;background:#494949;"></div>
<div style="left:3328.8px;top:155px;width:1.6px;height:9px;background:#494949;"></div>
<div style="left:3332.0px;top:155px;width:1.6px;height:9px;background:#494949;"></div>
<div style="left:3335.2px;top:155px;width:1.6px;height:9px;background:#494949;"></div>
<svg style="left:3304px;top:178px;" width="34" height="38" viewBox="0 0 34 38"><rect x="3.5" y="3.5" width="8" height="8" fill="none" stroke="#dcdcdc" stroke-width="1.8"/><rect x="3.5" y="15.5" width="8" height="8" fill="none" stroke="#dcdcdc" stroke-width="1.8"/><rect x="2.6" y="27" width="9.8" height="9.8" fill="#dcdcdc"/><path d="M24 6 C31 12 32 24 21 30" fill="none" stroke="#dcdcdc" stroke-width="2.6"/><path d="M17 7 L27 4 L26 13 Z" fill="#dcdcdc"/></svg>
<div style="left:3282px;top:230px;width:75px;height:2px;background:#383838;"></div>
<div style="left:3282px;top:232px;width:75px;height:1px;background:#5c5c5c;"></div>
<div style="left:3300.0px;top:238px;width:1.6px;height:9px;background:#494949;"></div>
<div style="left:3303.2px;top:238px;width:1.6px;height:9px;background:#494949;"></div>
<div style="left:3306.4px;top:238px;width:1.6px;height:9px;background:#494949;"></div>
<div style="left:3309.6px;top:238px;width:1.6px;height:9px;background:#494949;"></div>
<div style="left:3312.8px;top:238px;width:1.6px;height:9px;background:#494949;"></div>
<div style="left:3316.0px;top:238px;width:1.6px;height:9px;background:#494949;"></div>
<div style="left:3319.2px;top:238px;width:1.6px;height:9px;background:#494949;"></div>
<div style="left:3322.4px;top:238px;width:1.6px;height:9px;background:#494949;"></div>
<div style="left:3325.6px;top:238px;width:1.6px;height:9px;background:#494949;"></div>
<div style="left:3328.8px;top:238px;width:1.6px;height:9px;background:#494949;"></div>
<div style="left:3332.0px;top:238px;width:1.6px;height:9px;background:#494949;"></div>
<div style="left:3335.2px;top:238px;width:1.6px;height:9px;background:#494949;"></div>
<div style="left:3292px;top:257px;width:53px;height:44px;background:#383838;border-radius:4px;"></div>
<svg style="left:3304px;top:263px;" width="34" height="34" viewBox="0 0 34 34"><path d="M11 2 L20 6 V16 L11 20 L2 16 V6 Z" fill="#8a8a8a" stroke="#dcdcdc" stroke-width="1.8" stroke-linejoin="round"/><path d="M2 6 L11 10 L20 6 M11 10 V20" fill="none" stroke="#dcdcdc" stroke-width="1.6"/><rect x="24" y="2" width="7" height="7" fill="#dcdcdc"/><rect x="24" y="11.5" width="7" height="7" fill="#dcdcdc"/><rect x="2" y="25" width="29" height="7" fill="#dcdcdc"/><path d="M24 27 H30 L27 31 Z" fill="#383838"/></svg>
<div style="left:3282px;top:312px;width:75px;height:2px;background:#383838;"></div>
<div style="left:3282px;top:314px;width:75px;height:1px;background:#5c5c5c;"></div>
<div style="left:3300.0px;top:320px;width:1.6px;height:9px;background:#494949;"></div>
<div style="left:3303.2px;top:320px;width:1.6px;height:9px;background:#494949;"></div>
<div style="left:3306.4px;top:320px;width:1.6px;height:9px;background:#494949;"></div>
<div style="left:3309.6px;top:320px;width:1.6px;height:9px;background:#494949;"></div>
<div style="left:3312.8px;top:320px;width:1.6px;height:9px;background:#494949;"></div>
<div style="left:3316.0px;top:320px;width:1.6px;height:9px;background:#494949;"></div>
<div style="left:3319.2px;top:320px;width:1.6px;height:9px;background:#494949;"></div>
<div style="left:3322.4px;top:320px;width:1.6px;height:9px;background:#494949;"></div>
<div style="left:3325.6px;top:320px;width:1.6px;height:9px;background:#494949;"></div>
<div style="left:3328.8px;top:320px;width:1.6px;height:9px;background:#494949;"></div>
<div style="left:3332.0px;top:320px;width:1.6px;height:9px;background:#494949;"></div>
<div style="left:3335.2px;top:320px;width:1.6px;height:9px;background:#494949;"></div>
<svg style="left:3300px;top:342px;" width="44" height="44" viewBox="0 0 44 44"><rect x="3" y="4" width="13" height="21" fill="none" stroke="#dcdcdc" stroke-width="1.8"/><rect x="25.6" y="16" width="14.7" height="19.5" fill="none" stroke="#dcdcdc" stroke-width="1.8"/><path d="M1.8 2.8 L22.8 39 H41.5" fill="none" stroke="#dcdcdc" stroke-width="2.4" stroke-linejoin="round"/><path d="M1.8 2.8 H17 L27 16 M16 25 L26 39 M28 18 L39 33" fill="none" stroke="#dcdcdc" stroke-width="1.6"/></svg>
<div style="left:3282px;top:396px;width:75px;height:2px;background:#383838;"></div>
<div style="left:3282px;top:398px;width:75px;height:1px;background:#5c5c5c;"></div>
<div style="left:3357px;top:151px;width:5px;height:2025px;background:#383838;"></div>
<div style="left:3358.5px;top:151px;width:1.8px;height:2025px;background:#4c4c4c;"></div>
<div style="left:3362px;top:151px;width:478px;height:56px;background:#424242;"></div>
<div style="left:3362px;top:206px;width:478px;height:1px;background:#3a3a3a;"></div>
<div style="left:3362px;top:151px;width:89px;height:56px;background:#535353;border-right:1px solid #3a3a3a;box-sizing:border-box;"></div>
<span style="left:3381.5px;top:167.88px;font-size:22px;line-height:22px;color:#f0f0f0;font-weight:bold;transform:scaleX(0.8879);">Color</span>
<div style="left:3451px;top:151px;width:125px;height:55px;background:#424242;border-right:1px solid #383838;box-sizing:border-box;"></div>
<span style="left:3469px;top:167.88px;font-size:22px;line-height:22px;color:#a4a4a4;font-weight:bold;transform:scaleX(0.8670);">Swatches</span>
<div style="left:3806px;top:171.0px;width:20.5px;height:1.8px;background:#c8c8c8;"></div>
<div style="left:3806px;top:175.3px;width:20.5px;height:1.8px;background:#c8c8c8;"></div>
<div style="left:3806px;top:179.6px;width:20.5px;height:1.8px;background:#c8c8c8;"></div>
<div style="left:3806px;top:183.9px;width:20.5px;height:1.8px;background:#c8c8c8;"></div>
<div style="left:3401px;top:248px;width:39px;height:39px;background:#fff;border:1.5px solid #2c2c2c;box-sizing:border-box;"></div>
<div style="left:3381px;top:228.5px;width:37.5px;height:37.5px;background:#000;border:2px solid #f4f4f4;box-sizing:border-box;box-shadow:0 0 0 1px #1c1c1c,0 0 0 2.6px #8c8c8c;"></div>
<div style="left:3452px;top:220px;width:283px;height:184px;background:linear-gradient(to top,#000,rgba(0,0,0,0)),linear-gradient(to right,#fff,#f00);"></div>
<div style="left:3768px;top:220px;width:39px;height:184px;background:linear-gradient(to bottom,#ff0000 0%,#ff00ff 16.6%,#0000ff 33.3%,#00ffff 50%,#00ff00 66.6%,#ffff00 83.3%,#ff0000 100%);"></div>
<svg style="left:3748px;top:393px;" width="22" height="22" viewBox="0 0 22 22"><path d="M3 3 H11 L18 10.5 L11 18 H3 Z" fill="#fff" stroke="#111" stroke-width="2" stroke-linejoin="round"/></svg>
<svg style="left:3452px;top:390px;" width="20" height="14" viewBox="0 0 20 14"><circle cx="4" cy="11.5" r="7.5" fill="none" stroke="#fff" stroke-width="1.8"/></svg>
<div style="left:3362px;top:417px;width:478px;height:6px;background:#383838;"></div>
<div style="left:3362px;top:423px;width:478px;height:56px;background:#424242;"></div>
<div style="left:3362px;top:478px;width:478px;height:1px;background:#3a3a3a;"></div>
<div style="left:3362px;top:423px;width:155px;height:56px;background:#535353;border-right:1px solid #3a3a3a;box-sizing:border-box;"></div>
<span style="left:3381.5px;top:439.88px;font-size:22px;line-height:22px;color:#f0f0f0;font-weight:bold;transform:scaleX(0.8931);">Adjustments</span>
<div style="left:3517px;top:423px;width:92px;height:55px;background:#424242;border-right:1px solid #383838;box-sizing:border-box;"></div>
<span style="left:3535px;top:439.88px;font-size:22px;line-height:22px;color:#a4a4a4;font-weight:bold;transform:scaleX(0.8639);">Styles</span>
<div style="left:3806px;top:443.0px;width:20.5px;height:1.8px;background:#c8c8c8;"></div>
<div style="left:3806px;top:447.3px;width:20.5px;height:1.8px;background:#c8c8c8;"></div>
<div style="left:3806px;top:451.6px;width:20.5px;height:1.8px;background:#c8c8c8;"></div>
<div style="left:3806px;top:455.9px;width:20.5px;height:1.8px;background:#c8c8c8;"></div>
<span style="left:3381px;top:489.88px;font-size:22px;line-height:22px;color:#d2d2d2;font-weight:bold;transform:scaleX(0.9696);">Add an adjustment</span>
<div style="left:3362px;top:685px;width:478px;height:6px;background:#383838;"></div>
<div style="left:3362px;top:691px;width:478px;height:56px;background:#424242;"></div>
<div style="left:3362px;top:746px;width:478px;height:1px;background:#3a3a3a;"></div>
<div style="left:3362px;top:691px;width:95px;height:56px;background:#535353;border-right:1px solid #3a3a3a;box-sizing:border-box;"></div>
<span style="left:3382px;top:707.88px;font-size:22px;line-height:22px;color:#f0f0f0;font-weight:bold;transform:scaleX(0.8176);">Layers</span>
<div style="left:3457px;top:691px;width:120px;height:55px;background:#424242;border-right:1px solid #383838;box-sizing:border-box;"></div>
<span style="left:3475.5px;top:707.88px;font-size:22px;line-height:22px;color:#a4a4a4;font-weight:bold;transform:scaleX(0.8533);">Channels</span>
<div style="left:3577px;top:691px;width:90px;height:55px;background:#424242;border-right:1px solid #383838;box-sizing:border-box;"></div>
<span style="left:3598px;top:707.88px;font-size:22px;line-height:22px;color:#a4a4a4;font-weight:bold;transform:scaleX(0.8512);">Paths</span>
<div style="left:3806px;top:711.0px;width:20.5px;height:1.8px;background:#c8c8c8;"></div>
<div style="left:3806px;top:715.3px;width:20.5px;height:1.8px;background:#c8c8c8;"></div>
<div style="left:3806px;top:719.6px;width:20.5px;height:1.8px;background:#c8c8c8;"></div>
<div style="left:3806px;top:723.9px;width:20.5px;height:1.8px;background:#c8c8c8;"></div>
<svg style="left:3454.0px;top:523.0px;" width="36" height="36" viewBox="0 0 36 36"><path d="M18 1.5 V6.3" stroke="#dcdcdc" stroke-width="2.6" stroke-linecap="round" transform="rotate(0 18 18)"/><path d="M18 1.5 V6.3" stroke="#dcdcdc" stroke-width="2.6" stroke-linecap="round" transform="rotate(45 18 18)"/><path d="M18 1.5 V6.3" stroke="#dcdcdc" stroke-width="2.6" stroke-linecap="round" transform="rotate(90 18 18)"/><path d="M18 1.5 V6.3" stroke="#dcdcdc" stroke-width="2.6" stroke-linecap="round" transform="rotate(135 18 18)"/><path d="M18 1.5 V6.3" stroke="#dcdcdc" stroke-width="2.6" stroke-linecap="round" transform="rotate(180 18 18)"/><path d="M18 1.5 V6.3" stroke="#dcdcdc" stroke-width="2.6" stroke-linecap="round" transform="rotate(225 18 18)"/><path d="M18 1.5 V6.3" stroke="#dcdcdc" stroke-width="2.6" stroke-linecap="round" transform="rotate(270 18 18)"/><path d="M18 1.5 V6.3" stroke="#dcdcdc" stroke-width="2.6" stroke-linecap="round" transform="rotate(315 18 18)"/><circle cx="18" cy="18" r="8.8" fill="none" stroke="#dcdcdc" stroke-width="2"/><path d="M18 9.2 A8.8 8.8 0 0 1 18 26.8 Z" fill="#dcdcdc"/></svg>
<svg style="left:3502.0px;top:523.0px;" width="36" height="36" viewBox="0 0 36 36"><path d="M0 29 V17 L2 15 L3 20 L5 12 L7 18 L9 10 L11 16 L13 8 L15 15 L17 6 L19 4 L21 13 L23 8 L25 16 L27 11 L29 18 L31 13 L33 19 L35 16 L36 18 V29 Z" fill="#dcdcdc"/></svg>
<svg style="left:3550.0px;top:523.0px;" width="36" height="36" viewBox="0 0 36 36"><rect x="3" y="6" width="30" height="24" fill="none" stroke="#dcdcdc" stroke-width="2"/><path d="M3 14 H33 M3 22 H33 M13 6 V30 M23 6 V30" stroke="#a0a0a0" stroke-width="1.4"/><path d="M4 29 C16 29 18 7 32 7" fill="none" stroke="#dcdcdc" stroke-width="2"/></svg>
<svg style="left:3598.0px;top:523.0px;" width="36" height="36" viewBox="0 0 36 36"><rect x="3" y="6" width="30" height="24" fill="#dcdcdc"/><path d="M4 29 L32 7 V29 Z" fill="#535353"/><path d="M7 13 H15 M11 9 V17" stroke="#535353" stroke-width="2"/><path d="M22 24 H30" stroke="#dcdcdc" stroke-width="2"/><rect x="3" y="6" width="30" height="24" fill="none" stroke="#dcdcdc" stroke-width="2"/></svg>
<svg style="left:3646.0px;top:523.0px;" width="36" height="36" viewBox="0 0 36 36"><path d="M4 6 H32 L18 31 Z" fill="#7c7c7c" stroke="#dcdcdc" stroke-width="2.4" stroke-linejoin="round"/><circle cx="18" cy="14" r="4" fill="#606060"/></svg>
<svg style="left:3430.0px;top:578.0px;" width="36" height="36" viewBox="0 0 36 36"><rect x="3" y="6" width="30" height="24" fill="#dcdcdc"/><rect x="5" y="8" width="26" height="8" fill="#3c3c3c"/><path d="M9 8 V16 M14 8 V16 M19 8 V16 M24 8 V16" stroke="#9a9a9a" stroke-width="2.5"/><rect x="5" y="18.5" width="26" height="9.5" fill="url(#gh)"/><defs><linearGradient id="gh"><stop offset="0" stop-color="#2a2a2a"/><stop offset="1" stop-color="#d0d0d0"/></linearGradient></defs></svg>
<svg style="left:3478.0px;top:580.5px;" width="36" height="36" viewBox="0 0 36 36"><path d="M3 9 H33" stroke="#dcdcdc" stroke-width="2.2"/><circle cx="18" cy="7" r="3" fill="#535353" stroke="#dcdcdc" stroke-width="2"/><path d="M7 10 L2 23 M7 10 L12 23 M29 10 L24 23 M29 10 L34 23" stroke="#dcdcdc" stroke-width="1.8" fill="none"/><path d="M1 23 H13 A6 6 0 0 1 1 23 Z M23 23 H35 A6 6 0 0 1 23 23 Z" fill="#dcdcdc"/></svg>
<svg style="left:3526.0px;top:578.0px;" width="36" height="36" viewBox="0 0 36 36"><rect x="3" y="6" width="30" height="24" fill="#dcdcdc"/><rect x="5" y="8" width="13" height="20" fill="#535353"/></svg>
<svg style="left:3574.0px;top:578.0px;" width="36" height="36" viewBox="0 0 36 36"><path d="M1 10 H9 L11 6 H21 L23 10 H29 V27 H1 Z" fill="#dcdcdc"/><circle cx="14" cy="18" r="5.5" fill="#535353"/><circle cx="14" cy="18" r="3" fill="#dcdcdc"/><circle cx="27" cy="27" r="6.2" fill="#7a7a7a" stroke="#dcdcdc" stroke-width="2"/></svg>
<svg style="left:3622.0px;top:578.0px;" width="36" height="36" viewBox="0 0 36 36"><circle cx="18" cy="12" r="8.5" fill="#8c8c8c"/><circle cx="12" cy="23" r="8.5" fill="#dcdcdc" opacity="0.85"/><circle cx="24" cy="23" r="8.5" fill="#b4b4b4" opacity="0.85"/><path d="M18 15 L22 22 H14 Z" fill="#5a5a5a"/></svg>
<svg style="left:3670.0px;top:578.0px;" width="36" height="36" viewBox="0 0 36 36"><rect x="3" y="6" width="30" height="24" fill="#6a6a6a" stroke="#dcdcdc" stroke-width="2"/><path d="M3 14 H33 M3 22 H33 M13 6 V30 M23 6 V30" stroke="#dcdcdc" stroke-width="2"/><rect x="4" y="7" width="8" height="6" fill="#9a9a9a"/><rect x="24" y="23" width="8" height="6" fill="#3c3c3c"/><rect x="14" y="23" width="8" height="6" fill="#4a4a4a"/></svg>
<svg style="left:3453.0px;top:632.0px;" width="36" height="36" viewBox="0 0 36 36"><rect x="3" y="6" width="30" height="24" fill="#dcdcdc"/><path d="M4 29 L4 7 H32 Z" fill="#535353"/><circle cx="18" cy="18" r="8" fill="#dcdcdc"/><path d="M11.7 23 A8 8 0 0 0 24.3 13 Z" fill="#535353"/><rect x="3" y="6" width="30" height="24" fill="none" stroke="#dcdcdc" stroke-width="2"/></svg>
<svg style="left:3502.0px;top:632.0px;" width="36" height="36" viewBox="0 0 36 36"><rect x="3" y="6" width="30" height="24" fill="#cfcfcf"/><path d="M4 24 L24 7 H32 L4 30 Z" fill="#8a8a8a"/><path d="M12 29 L32 13 V21 L22 29 Z" fill="#9c9c9c"/><path d="M4 14 L13 7 H4 Z" fill="#aaa"/><rect x="3" y="6" width="30" height="24" fill="none" stroke="#dcdcdc" stroke-width="2"/></svg>
<svg style="left:3550.0px;top:632.0px;" width="36" height="36" viewBox="0 0 36 36"><rect x="3" y="6" width="30" height="24" fill="#dcdcdc"/><path d="M5 27 V21 H10 V17 H16 V13 H23 V9 H31 V14 H27 V18 H21 V22 H14 V26 H9 V27 Z" fill="#3c3c3c"/><path d="M17 28 V25 H23 V22 H31 V28 Z" fill="#3c3c3c"/></svg>
<svg style="left:3598.0px;top:632.0px;" width="36" height="36" viewBox="0 0 36 36"><rect x="3" y="6" width="30" height="24" fill="#dcdcdc"/><path d="M4 7 L18 18 L4 29 Z M32 7 L18 18 L32 29 Z" fill="#5e5e5e"/><path d="M4 29 L18 18 L32 29 Z" fill="#9a9a9a"/><rect x="3" y="6" width="30" height="24" fill="none" stroke="#dcdcdc" stroke-width="2"/></svg>
<svg style="left:3646.0px;top:632.0px;" width="36" height="36" viewBox="0 0 36 36"><defs><linearGradient id="gm"><stop offset="0" stop-color="#2e2e2e"/><stop offset="1" stop-color="#d8d8d8"/></linearGradient></defs><rect x="3" y="6" width="30" height="24" fill="url(#gm)" stroke="#dcdcdc" stroke-width="2"/></svg>
<div style="left:3370px;top:764px;width:179px;height:35px;background:#454545;border:1px solid #666;box-sizing:border-box;border-radius:4px;"></div>
<svg style="left:3385px;top:770px;" width="24" height="24" viewBox="0 0 24 24"><circle cx="14" cy="9" r="6.2" fill="none" stroke="#dcdcdc" stroke-width="2.4"/><path d="M9.5 13.5 L3 20.5" stroke="#dcdcdc" stroke-width="3.4" stroke-linecap="round"/></svg>
<span style="left:3414.5px;top:771.30px;font-size:21.5px;line-height:21.5px;color:#ececec;transform:scaleX(0.8946);">Kind</span>
<svg style="left:3527px;top:779px;" width="16" height="10.5" viewBox="0 0 16 10.5"><path d="M2 2 L8.0 8.5 L14 2" fill="none" stroke="#d0d0d0" stroke-width="2.2"/></svg>
<svg style="left:3567.0px;top:767.0px;" width="32" height="32" viewBox="0 0 32 32"><rect x="4.5" y="7" width="23" height="18" fill="none" stroke="#dcdcdc" stroke-width="2"/><path d="M7 22 L12 14 L16 19 L20 13 L25 22 Z" fill="#dcdcdc"/></svg>
<svg style="left:3614.0px;top:767.0px;" width="32" height="32" viewBox="0 0 32 32"><circle cx="16" cy="16" r="10" fill="none" stroke="#dcdcdc" stroke-width="2"/><path d="M8.9 23.1 A10 10 0 0 0 23.1 8.9 Z" fill="#dcdcdc"/></svg>
<svg style="left:3662.0px;top:767.0px;" width="32" height="32" viewBox="0 0 32 32"><path d="M5 6 H27 V12 H24.5 V9.5 H18.2 V24 H21.5 V27 H10.5 V24 H13.8 V9.5 H7.5 V12 H5 Z" fill="#dcdcdc"/></svg>
<svg style="left:3710.5px;top:767.0px;" width="32" height="32" viewBox="0 0 32 32"><rect x="7" y="7" width="18" height="18" fill="none" stroke="#dcdcdc" stroke-width="2"/><g fill="#535353" stroke="#dcdcdc" stroke-width="1.8"><rect x="4" y="4" width="6" height="6"/><rect x="22" y="4" width="6" height="6"/><rect x="4" y="22" width="6" height="6"/><rect x="22" y="22" width="6" height="6"/></g></svg>
<svg style="left:3759.5px;top:767.0px;" width="32" height="32" viewBox="0 0 32 32"><path d="M12 5 H22 L27 10 V25 H17" fill="none" stroke="#dcdcdc" stroke-width="2"/><path d="M21 5 V11 H27" fill="none" stroke="#dcdcdc" stroke-width="1.8"/><rect x="5" y="15" width="12" height="12" fill="#dcdcdc"/></svg>
<div style="left:3812px;top:769px;width:18px;height:35px;background:#424242;border-radius:9px;"></div>
<div style="left:3813px;top:766px;width:16px;height:16px;background:#e0e0e0;border-radius:8px;"></div>
<div style="left:3362px;top:808px;width:478px;height:1px;background:#474747;"></div>
<div style="left:3370px;top:819px;width:260px;height:35px;background:#454545;border:1px solid #666;box-sizing:border-box;border-radius:4px;"></div>
<span style="left:3386px;top:826.30px;font-size:21.5px;line-height:21.5px;color:#ececec;transform:scaleX(0.8734);">Screen</span>
<svg style="left:3608px;top:834px;" width="16" height="10.5" viewBox="0 0 16 10.5"><path d="M2 2 L8.0 8.5 L14 2" fill="none" stroke="#d0d0d0" stroke-width="2.2"/></svg>
<span style="left:3645px;top:826.30px;font-size:21.5px;line-height:21.5px;color:#cfcfcf;transform:scaleX(0.9193);">Opacity:</span>
<span style="left:3735.5px;top:826.30px;font-size:21.5px;line-height:21.5px;color:#ececec;transform:scaleX(0.9365);">100%</span>
<div style="left:3726.5px;top:852px;width:104.5px;height:1.5px;background:#8a8a8a;"></div>
<svg style="left:3811px;top:834px;" width="16" height="10.5" viewBox="0 0 16 10.5"><path d="M2 2 L8.0 8.5 L14 2" fill="none" stroke="#d0d0d0" stroke-width="2.2"/></svg>
<div style="left:3362px;top:863px;width:478px;height:1px;background:#474747;"></div>
<span style="left:3374.5px;top:880.80px;font-size:21.5px;line-height:21.5px;color:#cfcfcf;transform:scaleX(0.8757);">Lock:</span>
<svg style="left:3436.0px;top:875.0px;" width="32" height="32" viewBox="0 0 32 32"><rect x="5" y="5" width="22" height="22" fill="#7a7a7a"/><g fill="#a8a8a8"><rect x="5" y="5" width="5.5" height="5.5"/><rect x="16" y="5" width="5.5" height="5.5"/><rect x="10.5" y="10.5" width="5.5" height="5.5"/><rect x="21.5" y="10.5" width="5.5" height="5.5"/><rect x="5" y="16" width="5.5" height="5.5"/><rect x="16" y="16" width="5.5" height="5.5"/><rect x="10.5" y="21.5" width="5.5" height="5.5"/><rect x="21.5" y="21.5" width="5.5" height="5.5"/></g></svg>
<svg style="left:3481.0px;top:875.0px;" width="32" height="32" viewBox="0 0 32 32"><path d="M27 3 C29 5 28 7 26 10 L18 20 L14 17 L23 6 C25 4 26 3 27 3 Z" fill="#8e8e8e"/><path d="M12.5 18 C9 18.5 7.5 21 7 24 C6.7 26 5 27.5 4 28 C8.5 29.5 14 28 16.5 24.5 C17.5 23 17.5 21.5 17 21 Z" fill="#8e8e8e"/></svg>
<svg style="left:3523.0px;top:875.0px;" width="32" height="32" viewBox="0 0 32 32"><path d="M16 5 V27 M5 16 H27" stroke="#dcdcdc" stroke-width="2.2"/><path d="M16 2.5 L20.5 8.5 H11.5 Z M16 29.5 L20.5 23.5 H11.5 Z M2.5 16 L8.5 11.5 V20.5 Z M29.5 16 L23.5 11.5 V20.5 Z" fill="#dcdcdc"/></svg>
<svg style="left:3568.0px;top:875.0px;" width="32" height="32" viewBox="0 0 32 32"><path d="M7 2 V8 M2 8 H4.5 M9 8 H13 M16 8 H20 M23 8 H25 V11 M25 14 V18 M25 21 V25 H22 M19 25 H15 M12 25 H7 V22 M7 19 V15 M7 12 V10 M25 25 V30 M27.5 25 H30" fill="none" stroke="#dcdcdc" stroke-width="2.2"/><path d="M18 8 L25 15 V8 Z" fill="#dcdcdc"/></svg>
<svg style="left:3611.5px;top:875.0px;" width="32" height="32" viewBox="0 0 32 32"><path d="M10.5 15 V10.5 a5.5 5.5 0 0 1 11 0 V15" fill="none" stroke="#dcdcdc" stroke-width="2.6"/><rect x="6.5" y="14.5" width="19" height="13.5" rx="1.5" fill="#dcdcdc"/><circle cx="16" cy="21" r="2.4" fill="#535353"/></svg>
<span style="left:3688.5px;top:880.80px;font-size:21.5px;line-height:21.5px;color:#cfcfcf;transform:scaleX(0.8972);">Fill:</span>
<span style="left:3735.5px;top:880.80px;font-size:21.5px;line-height:21.5px;color:#ececec;transform:scaleX(0.9365);">100%</span>
<div style="left:3726.5px;top:906.5px;width:104.5px;height:1.5px;background:#8a8a8a;"></div>
<svg style="left:3811px;top:889px;" width="16" height="10.5" viewBox="0 0 16 10.5"><path d="M2 2 L8.0 8.5 L14 2" fill="none" stroke="#d0d0d0" stroke-width="2.2"/></svg>
<div style="left:3362px;top:922px;width:478px;height:1203px;background:#4b4b4b;"></div>
<div style="left:3362px;top:923px;width:446px;height:811.5px;background:#535353;"></div>
<div style="left:3836px;top:922px;width:4px;height:1203px;background:#505050;"></div>
<div style="left:3362px;top:922px;width:447px;height:1.5px;background:#454545;"></div>
<div style="left:3423px;top:923px;width:1px;height:270px;background:#474747;"></div>
<div style="left:3424px;top:923px;width:361px;height:78px;background:#6a6a6a;"></div>
<div style="left:3785px;top:923px;width:23px;height:78px;background:#5c5c5c;"></div>
<svg style="left:3378.7px;top:952.3px;" width="27.6" height="18.4" viewBox="0 0 30 20"><path d="M1 10 C6 2.5 11 1 15 1 C19 1 24 2.5 29 10 C24 17.5 19 19 15 19 C11 19 6 17.5 1 10 Z" fill="#dcdcdc"/><circle cx="15" cy="10" r="6" fill="#535353"/><circle cx="15" cy="10" r="3.4" fill="#dcdcdc"/><circle cx="13.6" cy="8.6" r="1.3" fill="#535353"/></svg>
<div style="left:3431px;top:929.5px;width:62px;height:62.5px;background:#000;"></div>
<svg style="left:3425px;top:924px;" width="74" height="74" viewBox="0 0 74 74"><path d="M2 24 V2 H24 M50 2 H72 V24 M72 50 V72 H50 M24 72 H2 V50" fill="none" stroke="#f0f0f0" stroke-width="2.2"/></svg>
<svg style="left:3468px;top:966.5px;" width="26" height="26" viewBox="0 0 28 28"><rect x="0" y="0" width="28" height="28" fill="#7c7c7c"/><path d="M9 3.5 H18 L23.5 9 V22.5 H15" fill="none" stroke="#e6e6e6" stroke-width="2.6"/><path d="M17 3.5 V10 H23.5" fill="none" stroke="#e6e6e6" stroke-width="2"/><rect x="3.5" y="14" width="10" height="10" fill="#e6e6e6"/></svg>
<span style="left:3513px;top:953.10px;font-size:21.5px;line-height:21.5px;color:#ececec;transform:scaleX(0.9274);">Layer 211 copy 2</span>
<svg style="left:3754px;top:951px;" width="27" height="24" viewBox="0 0 27 24"><circle cx="9.5" cy="14" r="7.6" fill="none" stroke="#9e9e9e" stroke-width="1.8"/><circle cx="16.5" cy="9.5" r="7.6" fill="none" stroke="#dcdcdc" stroke-width="1.8"/></svg>
<svg style="left:3789px;top:956px;" width="14" height="9.5" viewBox="0 0 14 9.5"><path d="M2 7.5 L7.0 2 L12 7.5" fill="none" stroke="#d0d0d0" stroke-width="2.2"/></svg>
<svg style="left:3461.4px;top:1030.1px;" width="25.2" height="16.8" viewBox="0 0 30 20"><path d="M1 10 C6 2.5 11 1 15 1 C19 1 24 2.5 29 10 C24 17.5 19 19 15 19 C11 19 6 17.5 1 10 Z" fill="#dcdcdc"/><circle cx="15" cy="10" r="6" fill="#535353"/><circle cx="15" cy="10" r="3.4" fill="#dcdcdc"/><circle cx="13.6" cy="8.6" r="1.3" fill="#535353"/></svg>
<div style="left:3495.5px;top:1010.5px;width:61.5px;height:62px;background:#fdfdfd;outline:1px solid #3c3c3c;"></div>
<span style="left:3579px;top:1028.80px;font-size:21.5px;line-height:21.5px;color:#e4e4e4;transform:scaleX(0.9315);">Smart Filters</span>
<svg style="left:3495.9px;top:1087.6px;" width="25.2" height="16.8" viewBox="0 0 30 20"><path d="M1 10 C6 2.5 11 1 15 1 C19 1 24 2.5 29 10 C24 17.5 19 19 15 19 C11 19 6 17.5 1 10 Z" fill="#dcdcdc"/><circle cx="15" cy="10" r="6" fill="#535353"/><circle cx="15" cy="10" r="3.4" fill="#dcdcdc"/><circle cx="13.6" cy="8.6" r="1.3" fill="#535353"/></svg>
<span style="left:3533px;top:1085.30px;font-size:21.5px;line-height:21.5px;color:#e4e4e4;transform:scaleX(0.9380);">Motion Blur</span>
<svg style="left:3760px;top:1086.5px;" width="26" height="22" viewBox="0 0 26 22"><path d="M1 2 H25 M1 13 H25" stroke="#dcdcdc" stroke-width="1.8"/><path d="M10.5 4.5 L14.5 9.5 H6.5 Z M19.5 15.5 L24 20.5 H15 Z" fill="#dcdcdc"/></svg>
<svg style="left:3495.9px;top:1125.9px;" width="25.2" height="16.8" viewBox="0 0 30 20"><path d="M1 10 C6 2.5 11 1 15 1 C19 1 24 2.5 29 10 C24 17.5 19 19 15 19 C11 19 6 17.5 1 10 Z" fill="#dcdcdc"/><circle cx="15" cy="10" r="6" fill="#535353"/><circle cx="15" cy="10" r="3.4" fill="#dcdcdc"/><circle cx="13.6" cy="8.6" r="1.3" fill="#535353"/></svg>
<span style="left:3533px;top:1123.60px;font-size:21.5px;line-height:21.5px;color:#e4e4e4;transform:scaleX(0.9380);">Motion Blur</span>
<svg style="left:3760px;top:1124.8px;" width="26" height="22" viewBox="0 0 26 22"><path d="M1 2 H25 M1 13 H25" stroke="#dcdcdc" stroke-width="1.8"/><path d="M10.5 4.5 L14.5 9.5 H6.5 Z M19.5 15.5 L24 20.5 H15 Z" fill="#dcdcdc"/></svg>
<svg style="left:3495.9px;top:1164.2px;" width="25.2" height="16.8" viewBox="0 0 30 20"><path d="M1 10 C6 2.5 11 1 15 1 C19 1 24 2.5 29 10 C24 17.5 19 19 15 19 C11 19 6 17.5 1 10 Z" fill="#dcdcdc"/><circle cx="15" cy="10" r="6" fill="#535353"/><circle cx="15" cy="10" r="3.4" fill="#dcdcdc"/><circle cx="13.6" cy="8.6" r="1.3" fill="#535353"/></svg>
<span style="left:3533px;top:1161.90px;font-size:21.5px;line-height:21.5px;color:#e4e4e4;transform:scaleX(0.9380);">Motion Blur</span>
<svg style="left:3760px;top:1163.1px;" width="26" height="22" viewBox="0 0 26 22"><path d="M1 2 H25 M1 13 H25" stroke="#dcdcdc" stroke-width="1.8"/><path d="M10.5 4.5 L14.5 9.5 H6.5 Z M19.5 15.5 L24 20.5 H15 Z" fill="#dcdcdc"/></svg>
<div style="left:3362px;top:1192.3px;width:447px;height:1.5px;background:#454545;"></div>
<div style="left:3423px;top:1193.3px;width:1px;height:270px;background:#474747;"></div>
<div style="left:3785px;top:1193.3px;width:23px;height:78px;background:#4a4a4a;"></div>
<svg style="left:3378.7px;top:1222.6px;" width="27.6" height="18.4" viewBox="0 0 30 20"><path d="M1 10 C6 2.5 11 1 15 1 C19 1 24 2.5 29 10 C24 17.5 19 19 15 19 C11 19 6 17.5 1 10 Z" fill="#dcdcdc"/><circle cx="15" cy="10" r="6" fill="#535353"/><circle cx="15" cy="10" r="3.4" fill="#dcdcdc"/><circle cx="13.6" cy="8.6" r="1.3" fill="#535353"/></svg>
<div style="left:3431px;top:1199.8px;width:62px;height:62.5px;background:#000;"></div>
<svg style="left:3468px;top:1236.8px;" width="26" height="26" viewBox="0 0 28 28"><rect x="0" y="0" width="28" height="28" fill="#7c7c7c"/><path d="M9 3.5 H18 L23.5 9 V22.5 H15" fill="none" stroke="#e6e6e6" stroke-width="2.6"/><path d="M17 3.5 V10 H23.5" fill="none" stroke="#e6e6e6" stroke-width="2"/><rect x="3.5" y="14" width="10" height="10" fill="#e6e6e6"/></svg>
<span style="left:3513px;top:1223.40px;font-size:21.5px;line-height:21.5px;color:#ececec;transform:scaleX(0.9283);">Layer 211 copy</span>
<svg style="left:3754px;top:1221.3px;" width="27" height="24" viewBox="0 0 27 24"><circle cx="9.5" cy="14" r="7.6" fill="none" stroke="#9e9e9e" stroke-width="1.8"/><circle cx="16.5" cy="9.5" r="7.6" fill="none" stroke="#dcdcdc" stroke-width="1.8"/></svg>
<svg style="left:3789px;top:1226.3px;" width="14" height="9.5" viewBox="0 0 14 9.5"><path d="M2 7.5 L7.0 2 L12 7.5" fill="none" stroke="#d0d0d0" stroke-width="2.2"/></svg>
<svg style="left:3461.4px;top:1300.4px;" width="25.2" height="16.8" viewBox="0 0 30 20"><path d="M1 10 C6 2.5 11 1 15 1 C19 1 24 2.5 29 10 C24 17.5 19 19 15 19 C11 19 6 17.5 1 10 Z" fill="#dcdcdc"/><circle cx="15" cy="10" r="6" fill="#535353"/><circle cx="15" cy="10" r="3.4" fill="#dcdcdc"/><circle cx="13.6" cy="8.6" r="1.3" fill="#535353"/></svg>
<div style="left:3495.5px;top:1280.8px;width:61.5px;height:62px;background:#fdfdfd;outline:1px solid #3c3c3c;"></div>
<span style="left:3579px;top:1299.10px;font-size:21.5px;line-height:21.5px;color:#e4e4e4;transform:scaleX(0.9315);">Smart Filters</span>
<svg style="left:3495.9px;top:1357.9px;" width="25.2" height="16.8" viewBox="0 0 30 20"><path d="M1 10 C6 2.5 11 1 15 1 C19 1 24 2.5 29 10 C24 17.5 19 19 15 19 C11 19 6 17.5 1 10 Z" fill="#dcdcdc"/><circle cx="15" cy="10" r="6" fill="#535353"/><circle cx="15" cy="10" r="3.4" fill="#dcdcdc"/><circle cx="13.6" cy="8.6" r="1.3" fill="#535353"/></svg>
<span style="left:3533px;top:1355.60px;font-size:21.5px;line-height:21.5px;color:#e4e4e4;transform:scaleX(0.9380);">Motion Blur</span>
<svg style="left:3760px;top:1356.8px;" width="26" height="22" viewBox="0 0 26 22"><path d="M1 2 H25 M1 13 H25" stroke="#dcdcdc" stroke-width="1.8"/><path d="M10.5 4.5 L14.5 9.5 H6.5 Z M19.5 15.5 L24 20.5 H15 Z" fill="#dcdcdc"/></svg>
<svg style="left:3495.9px;top:1396.2px;" width="25.2" height="16.8" viewBox="0 0 30 20"><path d="M1 10 C6 2.5 11 1 15 1 C19 1 24 2.5 29 10 C24 17.5 19 19 15 19 C11 19 6 17.5 1 10 Z" fill="#dcdcdc"/><circle cx="15" cy="10" r="6" fill="#535353"/><circle cx="15" cy="10" r="3.4" fill="#dcdcdc"/><circle cx="13.6" cy="8.6" r="1.3" fill="#535353"/></svg>
<span style="left:3533px;top:1393.90px;font-size:21.5px;line-height:21.5px;color:#e4e4e4;transform:scaleX(0.9380);">Motion Blur</span>
<svg style="left:3760px;top:1395.1px;" width="26" height="22" viewBox="0 0 26 22"><path d="M1 2 H25 M1 13 H25" stroke="#dcdcdc" stroke-width="1.8"/><path d="M10.5 4.5 L14.5 9.5 H6.5 Z M19.5 15.5 L24 20.5 H15 Z" fill="#dcdcdc"/></svg>
<svg style="left:3495.9px;top:1434.5px;" width="25.2" height="16.8" viewBox="0 0 30 20"><path d="M1 10 C6 2.5 11 1 15 1 C19 1 24 2.5 29 10 C24 17.5 19 19 15 19 C11 19 6 17.5 1 10 Z" fill="#dcdcdc"/><circle cx="15" cy="10" r="6" fill="#535353"/><circle cx="15" cy="10" r="3.4" fill="#dcdcdc"/><circle cx="13.6" cy="8.6" r="1.3" fill="#535353"/></svg>
<span style="left:3533px;top:1432.20px;font-size:21.5px;line-height:21.5px;color:#e4e4e4;transform:scaleX(0.9380);">Motion Blur</span>
<svg style="left:3760px;top:1433.4px;" width="26" height="22" viewBox="0 0 26 22"><path d="M1 2 H25 M1 13 H25" stroke="#dcdcdc" stroke-width="1.8"/><path d="M10.5 4.5 L14.5 9.5 H6.5 Z M19.5 15.5 L24 20.5 H15 Z" fill="#dcdcdc"/></svg>
<div style="left:3362px;top:1462.6px;width:447px;height:1.5px;background:#454545;"></div>
<div style="left:3423px;top:1463.6px;width:1px;height:270px;background:#474747;"></div>
<div style="left:3785px;top:1463.6px;width:23px;height:78px;background:#4a4a4a;"></div>
<svg style="left:3378.7px;top:1492.9px;" width="27.6" height="18.4" viewBox="0 0 30 20"><path d="M1 10 C6 2.5 11 1 15 1 C19 1 24 2.5 29 10 C24 17.5 19 19 15 19 C11 19 6 17.5 1 10 Z" fill="#dcdcdc"/><circle cx="15" cy="10" r="6" fill="#535353"/><circle cx="15" cy="10" r="3.4" fill="#dcdcdc"/><circle cx="13.6" cy="8.6" r="1.3" fill="#535353"/></svg>
<div style="left:3431px;top:1470.1px;width:62px;height:62.5px;background:#000;"></div>
<svg style="left:3468px;top:1507.1px;" width="26" height="26" viewBox="0 0 28 28"><rect x="0" y="0" width="28" height="28" fill="#7c7c7c"/><path d="M9 3.5 H18 L23.5 9 V22.5 H15" fill="none" stroke="#e6e6e6" stroke-width="2.6"/><path d="M17 3.5 V10 H23.5" fill="none" stroke="#e6e6e6" stroke-width="2"/><rect x="3.5" y="14" width="10" height="10" fill="#e6e6e6"/></svg>
<span style="left:3513px;top:1493.70px;font-size:21.5px;line-height:21.5px;color:#ececec;transform:scaleX(0.9305);">Layer 211</span>
<svg style="left:3754px;top:1491.6px;" width="27" height="24" viewBox="0 0 27 24"><circle cx="9.5" cy="14" r="7.6" fill="none" stroke="#9e9e9e" stroke-width="1.8"/><circle cx="16.5" cy="9.5" r="7.6" fill="none" stroke="#dcdcdc" stroke-width="1.8"/></svg>
<svg style="left:3789px;top:1496.6px;" width="14" height="9.5" viewBox="0 0 14 9.5"><path d="M2 7.5 L7.0 2 L12 7.5" fill="none" stroke="#d0d0d0" stroke-width="2.2"/></svg>
<svg style="left:3461.4px;top:1570.7px;" width="25.2" height="16.8" viewBox="0 0 30 20"><path d="M1 10 C6 2.5 11 1 15 1 C19 1 24 2.5 29 10 C24 17.5 19 19 15 19 C11 19 6 17.5 1 10 Z" fill="#dcdcdc"/><circle cx="15" cy="10" r="6" fill="#535353"/><circle cx="15" cy="10" r="3.4" fill="#dcdcdc"/><circle cx="13.6" cy="8.6" r="1.3" fill="#535353"/></svg>
<div style="left:3495.5px;top:1551.1px;width:61.5px;height:62px;background:#fdfdfd;outline:1px solid #3c3c3c;"></div>
<span style="left:3579px;top:1569.40px;font-size:21.5px;line-height:21.5px;color:#e4e4e4;transform:scaleX(0.9315);">Smart Filters</span>
<svg style="left:3495.9px;top:1628.2px;" width="25.2" height="16.8" viewBox="0 0 30 20"><path d="M1 10 C6 2.5 11 1 15 1 C19 1 24 2.5 29 10 C24 17.5 19 19 15 19 C11 19 6 17.5 1 10 Z" fill="#dcdcdc"/><circle cx="15" cy="10" r="6" fill="#535353"/><circle cx="15" cy="10" r="3.4" fill="#dcdcdc"/><circle cx="13.6" cy="8.6" r="1.3" fill="#535353"/></svg>
<span style="left:3533px;top:1625.90px;font-size:21.5px;line-height:21.5px;color:#e4e4e4;transform:scaleX(0.9380);">Motion Blur</span>
<svg style="left:3760px;top:1627.1px;" width="26" height="22" viewBox="0 0 26 22"><path d="M1 2 H25 M1 13 H25" stroke="#dcdcdc" stroke-width="1.8"/><path d="M10.5 4.5 L14.5 9.5 H6.5 Z M19.5 15.5 L24 20.5 H15 Z" fill="#dcdcdc"/></svg>
<svg style="left:3495.9px;top:1666.5px;" width="25.2" height="16.8" viewBox="0 0 30 20"><path d="M1 10 C6 2.5 11 1 15 1 C19 1 24 2.5 29 10 C24 17.5 19 19 15 19 C11 19 6 17.5 1 10 Z" fill="#dcdcdc"/><circle cx="15" cy="10" r="6" fill="#535353"/><circle cx="15" cy="10" r="3.4" fill="#dcdcdc"/><circle cx="13.6" cy="8.6" r="1.3" fill="#535353"/></svg>
<span style="left:3533px;top:1664.20px;font-size:21.5px;line-height:21.5px;color:#e4e4e4;transform:scaleX(0.9380);">Motion Blur</span>
<svg style="left:3760px;top:1665.4px;" width="26" height="22" viewBox="0 0 26 22"><path d="M1 2 H25 M1 13 H25" stroke="#dcdcdc" stroke-width="1.8"/><path d="M10.5 4.5 L14.5 9.5 H6.5 Z M19.5 15.5 L24 20.5 H15 Z" fill="#dcdcdc"/></svg>
<svg style="left:3495.9px;top:1704.8px;" width="25.2" height="16.8" viewBox="0 0 30 20"><path d="M1 10 C6 2.5 11 1 15 1 C19 1 24 2.5 29 10 C24 17.5 19 19 15 19 C11 19 6 17.5 1 10 Z" fill="#dcdcdc"/><circle cx="15" cy="10" r="6" fill="#535353"/><circle cx="15" cy="10" r="3.4" fill="#dcdcdc"/><circle cx="13.6" cy="8.6" r="1.3" fill="#535353"/></svg>
<span style="left:3533px;top:1702.50px;font-size:21.5px;line-height:21.5px;color:#e4e4e4;transform:scaleX(0.9380);">Motion Blur</span>
<svg style="left:3760px;top:1703.7px;" width="26" height="22" viewBox="0 0 26 22"><path d="M1 2 H25 M1 13 H25" stroke="#dcdcdc" stroke-width="1.8"/><path d="M10.5 4.5 L14.5 9.5 H6.5 Z M19.5 15.5 L24 20.5 H15 Z" fill="#dcdcdc"/></svg>
<div style="left:3362px;top:1733.6px;width:447px;height:1.5px;background:#454545;"></div>
<div style="left:3362px;top:2125px;width:478px;height:51px;background:#535353;"></div>
<div style="left:3362px;top:2124px;width:478px;height:1px;background:#474747;"></div>
<svg style="left:3429.0px;top:2134.0px;" width="32" height="32" viewBox="0 0 32 32"><rect x="3" y="10" width="15" height="12" rx="6" fill="none" stroke="#8c8c8c" stroke-width="2.2"/><rect x="14" y="10" width="15" height="12" rx="6" fill="none" stroke="#8c8c8c" stroke-width="2.2"/><path d="M10 16 H22" stroke="#8c8c8c" stroke-width="2.2"/></svg>
<span style="left:3487px;top:2134.80px;font-size:28px;line-height:28px;color:#dcdcdc;font-style:italic;transform:scaleX(1.1479);">fx</span>
<svg style="left:3513px;top:2166px;" width="10" height="6" viewBox="0 0 10 6"><path d="M1 0.5 H9 L5 5 Z" fill="#dcdcdc"/></svg>
<svg style="left:3538.0px;top:2134.0px;" width="32" height="32" viewBox="0 0 32 32"><rect x="4" y="6" width="24" height="19" fill="#dcdcdc"/><circle cx="16" cy="15.5" r="5.4" fill="#535353"/></svg>
<svg style="left:3592.5px;top:2134.0px;" width="32" height="32" viewBox="0 0 32 32"><circle cx="16" cy="16" r="10" fill="none" stroke="#dcdcdc" stroke-width="2"/><path d="M8.9 23.1 A10 10 0 0 0 23.1 8.9 Z" fill="#dcdcdc"/></svg>
<svg style="left:3622px;top:2166px;" width="10" height="6" viewBox="0 0 10 6"><path d="M1 0.5 H9 L5 5 Z" fill="#dcdcdc"/></svg>
<svg style="left:3646.0px;top:2134.0px;" width="32" height="32" viewBox="0 0 32 32"><path d="M4 7 H13 L15 10 H28 V26 H4 Z" fill="#dcdcdc"/></svg>
<svg style="left:3700.0px;top:2134.0px;" width="32" height="32" viewBox="0 0 32 32"><path d="M6 6 H26 V26 H13 L6 19 Z" fill="none" stroke="#dcdcdc" stroke-width="2.2"/><path d="M6 19 H13 V26" fill="none" stroke="#dcdcdc" stroke-width="2"/></svg>
<svg style="left:3753.5px;top:2134.0px;" width="32" height="32" viewBox="0 0 32 32"><path d="M5 8 H27 M12 8 V5 H20 V8" fill="none" stroke="#dcdcdc" stroke-width="2.2"/><path d="M7.5 10 V27 H24.5 V10" fill="none" stroke="#dcdcdc" stroke-width="2.2"/><path d="M12 12 V24 M16 12 V24 M20 12 V24" stroke="#dcdcdc" stroke-width="1.8"/></svg>
<div style="left:2706px;top:232px;width:576px;height:760px;background:rgba(0,0,0,0.25);filter:blur(3px);"></div>
<div style="left:2709px;top:235px;width:571px;height:737px;background:#535353;border-left:1px solid #3c3c3c;box-sizing:border-box;"></div>
<div style="left:2709px;top:235px;width:571px;height:57px;background:#424242;"></div>
<div style="left:2709px;top:291px;width:571px;height:1px;background:#3a3a3a;"></div>
<div style="left:2709px;top:235px;width:134px;height:57px;background:#535353;border-right:1px solid #3a3a3a;box-sizing:border-box;"></div>
<span style="left:2729.5px;top:254.80px;font-size:21.5px;line-height:21.5px;color:#f0f0f0;font-weight:bold;transform:scaleX(0.9027);">Properties</span>
<svg style="left:3196px;top:254px;" width="22" height="18" viewBox="0 0 22 18"><path d="M2 2 L9 9 L2 16 M11 2 L18 9 L11 16" fill="none" stroke="#d0d0d0" stroke-width="1.8"/></svg>
<div style="left:3229.5px;top:253px;width:1.5px;height:21px;background:#8a8a8a;"></div>
<div style="left:3246px;top:255.5px;width:20.5px;height:1.8px;background:#c8c8c8;"></div>
<div style="left:3246px;top:259.8px;width:20.5px;height:1.8px;background:#c8c8c8;"></div>
<div style="left:3246px;top:264.1px;width:20.5px;height:1.8px;background:#c8c8c8;"></div>
<div style="left:3246px;top:268.4px;width:20.5px;height:1.8px;background:#c8c8c8;"></div>
<div style="left:2732px;top:304px;width:44px;height:44px;background:#3a3a3a;border-radius:3px;"></div>
<svg style="left:2740px;top:312px;" width="28" height="28" viewBox="0 0 28 28"><path d="M11 3 H19 L24 8 V22 H17" fill="none" stroke="#dcdcdc" stroke-width="2"/><path d="M18.5 3 V8.5 H24" fill="none" stroke="#dcdcdc" stroke-width="1.6"/><rect x="4" y="13" width="11" height="11" fill="#dcdcdc"/><rect x="8" y="6" width="6" height="6" fill="#dcdcdc"/></svg>
<div style="left:2784px;top:314px;width:33px;height:25px;background:#dedede;"></div>
<div style="left:2793.5px;top:319.5px;width:14px;height:14px;background:#4a4a4a;border-radius:7px;"></div>
<span style="left:2837px;top:315.38px;font-size:22px;line-height:22px;color:#d6d6d6;font-weight:bold;transform:scaleX(0.9589);">Embedded Smart Object</span>
<div style="left:2709px;top:359px;width:571px;height:1.5px;background:#484848;"></div>
<div style="left:3248px;top:361px;width:31px;height:561px;background:#4a4a4a;"></div>
<span style="left:2728px;top:374.80px;font-size:21.5px;line-height:21.5px;color:#bebebe;transform:scaleX(0.9275);">W:</span>
<span style="left:2772.5px;top:374.80px;font-size:21.5px;line-height:21.5px;color:#c8c8c8;transform:scaleX(0.9497);">11.429 in</span>
<span style="left:2956.5px;top:374.80px;font-size:21.5px;line-height:21.5px;color:#bebebe;transform:scaleX(0.9302);">H:</span>
<span style="left:2994px;top:374.80px;font-size:21.5px;line-height:21.5px;color:#c8c8c8;transform:scaleX(0.9497);">11.429 in</span>
<span style="left:2732px;top:418.30px;font-size:21.5px;line-height:21.5px;color:#bebebe;transform:scaleX(0.8369);">X:</span>
<span style="left:2767px;top:418.30px;font-size:21.5px;line-height:21.5px;color:#ececec;transform:scaleX(0.9520);">0 in</span>
<div style="left:2763.5px;top:441.5px;width:119.5px;height:1.5px;background:#8a8a8a;"></div>
<span style="left:2961px;top:418.30px;font-size:21.5px;line-height:21.5px;color:#bebebe;transform:scaleX(0.8887);">Y:</span>
<span style="left:2995px;top:418.30px;font-size:21.5px;line-height:21.5px;color:#ececec;transform:scaleX(0.9520);">0 in</span>
<div style="left:2992px;top:441.5px;width:119.5px;height:1.5px;background:#8a8a8a;"></div>
<div style="left:2720px;top:461px;width:520px;height:1.5px;background:#474747;"></div>
<span style="left:2728px;top:481.30px;font-size:21.5px;line-height:21.5px;color:#c8c8c8;transform:scaleX(0.9282);">Layer 211.psb</span>
<div style="left:2727px;top:520px;width:503px;height:34px;background:#505050;border:1px solid #5e5e5e;box-sizing:border-box;border-radius:4px;"></div>
<span style="left:2744px;top:525.80px;font-size:21.5px;line-height:21.5px;color:#7e7e7e;transform:scaleX(0.9257);">Don't Apply Layer Comp</span>
<svg style="left:3207px;top:534px;" width="16" height="11" viewBox="0 0 16 11"><path d="M2 2 L8 8 L14 2" fill="none" stroke="#646464" stroke-width="2.2"/></svg>
<div style="left:2720px;top:573px;width:520px;height:1.5px;background:#474747;"></div>
<div style="left:2833.5px;top:594.5px;width:227px;height:35px;background:#454545;border:1px solid #636363;box-sizing:border-box;border-radius:4px;"></div>
<span style="left:2887px;top:601.30px;font-size:21.5px;line-height:21.5px;color:#ececec;transform:scaleX(0.9219);">Edit Contents</span>
<div style="left:2833.5px;top:639.5px;width:227px;height:35px;background:#454545;border:1px solid #636363;box-sizing:border-box;border-radius:4px;"></div>
<span style="left:2858.5px;top:644.80px;font-size:21.5px;line-height:21.5px;color:#ececec;transform:scaleX(0.9387);">Convert to Linked...</span>
<div style="left:2709px;top:972px;width:571px;height:3px;background:#3a3a3a;"></div>
<div style="left:2709px;top:975px;width:571px;height:14px;background:#484848;"></div>
<div style="left:2974.0px;top:977px;width:1.4px;height:8px;background:#3c3c3c;"></div>
<div style="left:2977.2px;top:977px;width:1.4px;height:8px;background:#3c3c3c;"></div>
<div style="left:2980.4px;top:977px;width:1.4px;height:8px;background:#3c3c3c;"></div>
<div style="left:2983.6px;top:977px;width:1.4px;height:8px;background:#3c3c3c;"></div>
<div style="left:2986.8px;top:977px;width:1.4px;height:8px;background:#3c3c3c;"></div>
<div style="left:2990.0px;top:977px;width:1.4px;height:8px;background:#3c3c3c;"></div>
<div style="left:2993.2px;top:977px;width:1.4px;height:8px;background:#3c3c3c;"></div>
<div style="left:2996.4px;top:977px;width:1.4px;height:8px;background:#3c3c3c;"></div>
<div style="left:2999.6px;top:977px;width:1.4px;height:8px;background:#3c3c3c;"></div>
<div style="left:3002.8px;top:977px;width:1.4px;height:8px;background:#3c3c3c;"></div>
<div style="left:3006.0px;top:977px;width:1.4px;height:8px;background:#3c3c3c;"></div>
<div style="left:3009.2px;top:977px;width:1.4px;height:8px;background:#3c3c3c;"></div>
<svg style="left:2578px;top:1029px;" width="36" height="36" viewBox="0 0 38 38"><circle cx="19" cy="18.5" r="16" fill="#e8e8e8" stroke="#0a0a0a" stroke-width="4"/><circle cx="19" cy="18.5" r="17.6" fill="none" stroke="#e8e8e8" stroke-width="1.4"/><path d="M8 8 L30 29" stroke="#0a0a0a" stroke-width="5.5"/></svg>
</body></html>
